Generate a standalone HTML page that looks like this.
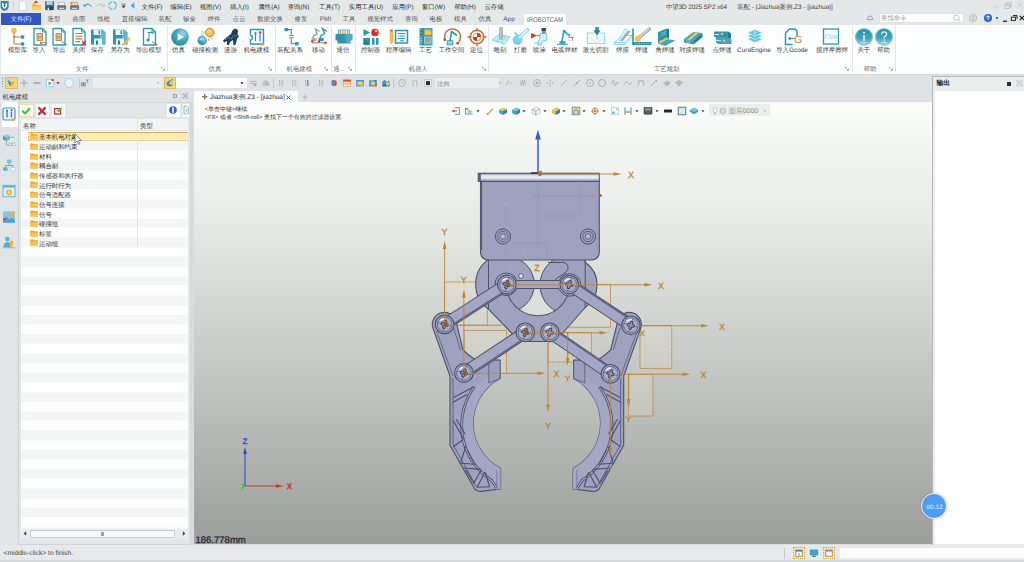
<!DOCTYPE html>
<html lang="zh"><head><meta charset="utf-8"><title>ZW3D</title><style>
html,body{margin:0;padding:0;background:#e4e8e9;}
body{width:1024px;height:562px;overflow:hidden;font-family:"Liberation Sans",sans-serif;}
#app{text-rendering:geometricPrecision;position:relative;width:1024px;height:562px;overflow:hidden;background:#e4e8e9;font-size:6.4px;line-height:8px;color:#3a3a3a;}
#app div,#app span,#app svg{position:absolute;}
.t{white-space:nowrap;text-align:center;height:8px;line-height:8px;font-size:6.4px;color:#3d3d3d;overflow:visible;}
.l{text-align:left;}
.g{color:#6a6a6a;}
#app .c{position:static;}
.nocjk #app .c{font-size:1.22em;letter-spacing:0.078em;line-height:0;vertical-align:-0.14em;-webkit-text-stroke:0.18px currentColor;}
.sep{width:1px;background:#dfe2e3;}
.tsep{width:1px;background:#c3c8ca;}
</style></head>
<body><div id="app">
<div class="t " style="left:127.0px;top:3.9px;width:50px;color:#2b2b2b"><span class="c">文件</span>(F)</div>
<div class="t " style="left:156.0px;top:3.9px;width:50px;color:#2b2b2b"><span class="c">编辑</span>(E)</div>
<div class="t " style="left:185.5px;top:3.9px;width:50px;color:#2b2b2b"><span class="c">视图</span>(V)</div>
<div class="t " style="left:214.5px;top:3.9px;width:50px;color:#2b2b2b"><span class="c">插入</span>(I)</div>
<div class="t " style="left:244.0px;top:3.9px;width:50px;color:#2b2b2b"><span class="c">属性</span>(A)</div>
<div class="t " style="left:273.5px;top:3.9px;width:50px;color:#2b2b2b"><span class="c">查询</span>(N)</div>
<div class="t " style="left:304.5px;top:3.9px;width:50px;color:#2b2b2b"><span class="c">工具</span>(T)</div>
<div class="t " style="left:341.0px;top:3.9px;width:50px;color:#2b2b2b"><span class="c">实用工具</span>(U)</div>
<div class="t " style="left:378.0px;top:3.9px;width:50px;color:#2b2b2b"><span class="c">应用</span>(P)</div>
<div class="t " style="left:408.5px;top:3.9px;width:50px;color:#2b2b2b"><span class="c">窗口</span>(W)</div>
<div class="t " style="left:440.0px;top:3.9px;width:50px;color:#2b2b2b"><span class="c">帮助</span>(H)</div>
<div class="t " style="left:469.0px;top:3.9px;width:50px;color:#2b2b2b"><span class="c">云存储</span></div>
<div class="t " style="left:651.5px;top:3.9px;width:90px;color:#444;letter-spacing:-0.12px"><span class="c">中望</span>3D 2025 SP2 x64</div>
<div class="t " style="left:725.0px;top:3.9px;width:120px;color:#444"><span class="c">装配</span> - [Jiazhua<span class="c">案例</span>.Z3 - [jiazhua]]</div>
<div style="left:1.0px;top:13.0px;width:39.8px;height:11.5px;background:#3157c3;"></div>
<div class="t " style="left:1.0px;top:16.0px;width:40px;color:#e8eefc"><span class="c">文件</span>(F)</div>
<div class="t " style="left:29.0px;top:16.2px;width:50px;color:#555"><span class="c">造型</span></div>
<div class="t " style="left:54.0px;top:16.2px;width:50px;color:#555"><span class="c">曲面</span></div>
<div class="t " style="left:78.5px;top:16.2px;width:50px;color:#555"><span class="c">线框</span></div>
<div class="t " style="left:109.5px;top:16.2px;width:50px;color:#555"><span class="c">直接编辑</span></div>
<div class="t " style="left:140.0px;top:16.2px;width:50px;color:#555"><span class="c">装配</span></div>
<div class="t " style="left:164.5px;top:16.2px;width:50px;color:#555"><span class="c">钣金</span></div>
<div class="t " style="left:189.0px;top:16.2px;width:50px;color:#555"><span class="c">焊件</span></div>
<div class="t " style="left:214.0px;top:16.2px;width:50px;color:#555"><span class="c">点云</span></div>
<div class="t " style="left:245.0px;top:16.2px;width:50px;color:#555"><span class="c">数据交换</span></div>
<div class="t " style="left:276.0px;top:16.2px;width:50px;color:#555"><span class="c">修复</span></div>
<div class="t " style="left:300.5px;top:16.2px;width:50px;color:#555">PMI</div>
<div class="t " style="left:324.0px;top:16.2px;width:50px;color:#555"><span class="c">工具</span></div>
<div class="t " style="left:355.0px;top:16.2px;width:50px;color:#555"><span class="c">视觉样式</span></div>
<div class="t " style="left:386.5px;top:16.2px;width:50px;color:#555"><span class="c">查询</span></div>
<div class="t " style="left:411.0px;top:16.2px;width:50px;color:#555"><span class="c">电极</span></div>
<div class="t " style="left:435.5px;top:16.2px;width:50px;color:#555"><span class="c">模具</span></div>
<div class="t " style="left:460.0px;top:16.2px;width:50px;color:#555"><span class="c">仿真</span></div>
<div class="t " style="left:484.0px;top:16.2px;width:50px;color:#555">App</div>
<div style="left:522.7px;top:13.4px;width:44.5px;height:12.0px;background:#fcfdfd;border:1px solid #e3e6e8;border-bottom:none;box-sizing:border-box;"></div>
<div class="t " style="left:521.0px;top:16.7px;width:48px;color:#666;font-size:6.8px;transform:scaleX(0.87)">IROBOTCAM</div>
<div style="left:878.5px;top:12.8px;width:85.0px;height:10.4px;background:#fdfdfd;border:1px solid #dde1e3;box-sizing:border-box;"></div>
<div class="t l " style="left:881.0px;top:15.4px;color:#9a9a9a"><span class="c">查找命令</span></div>
<div style="left:1.0px;top:24.5px;width:1023.0px;height:49.5px;background:#fcfdfd;"></div>
<div style="left:167.1px;top:26.0px;width:1.0px;height:46.0px;background:#e3e6e7;"></div>
<div style="left:274.8px;top:26.0px;width:1.0px;height:46.0px;background:#e3e6e7;"></div>
<div style="left:331.3px;top:26.0px;width:1.0px;height:46.0px;background:#e3e6e7;"></div>
<div style="left:354.7px;top:26.0px;width:1.0px;height:46.0px;background:#e3e6e7;"></div>
<div style="left:488.0px;top:26.0px;width:1.0px;height:46.0px;background:#e3e6e7;"></div>
<div style="left:852.3px;top:26.0px;width:1.0px;height:46.0px;background:#e3e6e7;"></div>
<div style="left:895.0px;top:26.0px;width:1.0px;height:46.0px;background:#e3e6e7;"></div>
<div class="t " style="left:-7.5px;top:47.2px;width:50px;"><span class="c">模型库</span></div>
<div class="t " style="left:14.0px;top:47.2px;width:50px;"><span class="c">导入</span></div>
<div class="t " style="left:34.0px;top:47.2px;width:50px;"><span class="c">导出</span></div>
<div class="t " style="left:54.0px;top:47.2px;width:50px;"><span class="c">关闭</span></div>
<div class="t " style="left:72.5px;top:47.2px;width:50px;"><span class="c">保存</span></div>
<div class="t " style="left:95.0px;top:47.2px;width:50px;"><span class="c">另存为</span></div>
<div class="t " style="left:123.5px;top:47.2px;width:50px;"><span class="c">导出模型</span></div>
<div class="t " style="left:153.5px;top:47.2px;width:50px;"><span class="c">仿真</span></div>
<div class="t " style="left:180.0px;top:47.2px;width:50px;"><span class="c">碰撞检测</span></div>
<div class="t " style="left:205.5px;top:47.2px;width:50px;"><span class="c">漫游</span></div>
<div class="t " style="left:231.5px;top:47.2px;width:50px;"><span class="c">机电建模</span></div>
<div class="t " style="left:265.0px;top:47.2px;width:50px;"><span class="c">装配关系</span></div>
<div class="t " style="left:293.5px;top:47.2px;width:50px;"><span class="c">移动</span></div>
<div class="t " style="left:318.0px;top:47.2px;width:50px;"><span class="c">通信</span></div>
<div class="t " style="left:345.5px;top:47.2px;width:50px;"><span class="c">控制器</span></div>
<div class="t " style="left:373.5px;top:47.2px;width:50px;"><span class="c">程序编辑</span></div>
<div class="t " style="left:400.5px;top:47.2px;width:50px;"><span class="c">工艺</span></div>
<div class="t " style="left:426.5px;top:47.2px;width:50px;"><span class="c">工作空间</span></div>
<div class="t " style="left:451.5px;top:47.2px;width:50px;"><span class="c">定位</span></div>
<div class="t " style="left:475.0px;top:47.2px;width:50px;"><span class="c">雕刻</span></div>
<div class="t " style="left:495.5px;top:47.2px;width:50px;"><span class="c">打磨</span></div>
<div class="t " style="left:514.5px;top:47.2px;width:50px;"><span class="c">喷涂</span></div>
<div class="t " style="left:539.5px;top:47.2px;width:50px;"><span class="c">电弧焊材</span></div>
<div class="t " style="left:570.5px;top:47.2px;width:50px;"><span class="c">激光切割</span></div>
<div class="t " style="left:597.5px;top:47.2px;width:50px;"><span class="c">焊接</span></div>
<div class="t " style="left:616.5px;top:47.2px;width:50px;"><span class="c">焊缝</span></div>
<div class="t " style="left:640.0px;top:47.2px;width:50px;"><span class="c">角焊缝</span></div>
<div class="t " style="left:667.0px;top:47.2px;width:50px;"><span class="c">对接焊缝</span></div>
<div class="t " style="left:697.0px;top:47.2px;width:50px;"><span class="c">点焊缝</span></div>
<div class="t " style="left:729.0px;top:47.2px;width:50px;">CuraEngine</div>
<div class="t " style="left:767.0px;top:47.2px;width:50px;"><span class="c">导入</span>Gcode</div>
<div class="t " style="left:807.0px;top:47.2px;width:50px;"><span class="c">搅拌摩擦焊</span></div>
<div class="t " style="left:838.8px;top:47.2px;width:50px;"><span class="c">关于</span></div>
<div class="t " style="left:858.5px;top:47.2px;width:50px;"><span class="c">帮助</span></div>
<div class="t g" style="left:57.0px;top:66.3px;width:50px;"><span class="c">文件</span></div>
<div class="t g" style="left:189.9px;top:66.3px;width:50px;"><span class="c">仿真</span></div>
<div class="t g" style="left:274.3px;top:66.3px;width:50px;"><span class="c">机电建模</span></div>
<div class="t g" style="left:314.0px;top:66.3px;width:50px;"><span class="c">通</span>...</div>
<div class="t g" style="left:393.4px;top:66.3px;width:50px;"><span class="c">机器人</span></div>
<div class="t g" style="left:641.7px;top:66.3px;width:50px;"><span class="c">工艺规划</span></div>
<div class="t g" style="left:845.0px;top:66.3px;width:50px;"><span class="c">帮助</span></div>
<svg style="left:160.9px;top:66.5px" width="4" height="4" viewBox="0 0 4 4" ><path d="M0.3 0.3H2M0.3 0.3V2" stroke="#8a8f92" stroke-width="0.7" fill="none"/><path d="M1.3 3.6L3.6 3.6L3.6 1.3Z" fill="#7a7f82"/></svg>
<svg style="left:268.3px;top:66.5px" width="4" height="4" viewBox="0 0 4 4" ><path d="M0.3 0.3H2M0.3 0.3V2" stroke="#8a8f92" stroke-width="0.7" fill="none"/><path d="M1.3 3.6L3.6 3.6L3.6 1.3Z" fill="#7a7f82"/></svg>
<svg style="left:324.2px;top:66.5px" width="4" height="4" viewBox="0 0 4 4" ><path d="M0.3 0.3H2M0.3 0.3V2" stroke="#8a8f92" stroke-width="0.7" fill="none"/><path d="M1.3 3.6L3.6 3.6L3.6 1.3Z" fill="#7a7f82"/></svg>
<svg style="left:348.3px;top:66.5px" width="4" height="4" viewBox="0 0 4 4" ><path d="M0.3 0.3H2M0.3 0.3V2" stroke="#8a8f92" stroke-width="0.7" fill="none"/><path d="M1.3 3.6L3.6 3.6L3.6 1.3Z" fill="#7a7f82"/></svg>
<svg style="left:481.8px;top:66.5px" width="4" height="4" viewBox="0 0 4 4" ><path d="M0.3 0.3H2M0.3 0.3V2" stroke="#8a8f92" stroke-width="0.7" fill="none"/><path d="M1.3 3.6L3.6 3.6L3.6 1.3Z" fill="#7a7f82"/></svg>
<svg style="left:844.6px;top:66.5px" width="4" height="4" viewBox="0 0 4 4" ><path d="M0.3 0.3H2M0.3 0.3V2" stroke="#8a8f92" stroke-width="0.7" fill="none"/><path d="M1.3 3.6L3.6 3.6L3.6 1.3Z" fill="#7a7f82"/></svg>
<svg style="left:888.5px;top:66.5px" width="4" height="4" viewBox="0 0 4 4" ><path d="M0.3 0.3H2M0.3 0.3V2" stroke="#8a8f92" stroke-width="0.7" fill="none"/><path d="M1.3 3.6L3.6 3.6L3.6 1.3Z" fill="#7a7f82"/></svg>
<div style="left:0.0px;top:74.0px;width:1024.0px;height:17.5px;background:#dee2e4;border-top:1px solid #d4d8da;box-sizing:border-box;"></div>
<div style="left:2.2px;top:78.0px;width:1.0px;height:10.0px;background:repeating-linear-gradient(#7c7fb0 0 1px,transparent 1px 2.6px);"></div>
<div style="left:5.0px;top:77.0px;width:12.5px;height:12.0px;background:#f5d77e;border:1px solid #e3bb55;box-sizing:border-box;"></div>
<div style="left:93.0px;top:78.3px;width:70.0px;height:9.8px;background:#eceeee;"></div>
<div style="left:163.5px;top:77.0px;width:12.5px;height:12.0px;background:#f5d77e;border:1px solid #e3bb55;box-sizing:border-box;"></div>
<div style="left:176.0px;top:78.3px;width:70.5px;height:9.8px;background:#fdfdfd;"></div>
<div style="left:434.5px;top:78.3px;width:64.0px;height:9.8px;background:#eceeee;"></div>
<div class="t l " style="left:437.0px;top:80.8px;color:#777"><span class="c">法向</span></div>
<div style="left:78.5px;top:78.0px;width:1.0px;height:10.0px;background:#c3c8ca;"></div>
<div style="left:273.0px;top:78.0px;width:1.0px;height:10.0px;background:#c3c8ca;"></div>
<div style="left:393.0px;top:78.0px;width:1.0px;height:10.0px;background:#c3c8ca;"></div>
<div style="left:0.0px;top:91.5px;width:191.0px;height:453.5px;background:#e0e4e5;"></div>
<div class="t l " style="left:2.5px;top:93.7px;color:#333"><span class="c">机电建模</span></div>
<div style="left:18.0px;top:102.0px;width:172.5px;height:443.0px;background:#e2e6e7;border:1px solid #ced3d5;box-sizing:border-box;"></div>
<div style="left:1.5px;top:102.0px;width:16.0px;height:24.5px;background:#fcfdfd;"></div>
<div style="left:18.5px;top:104.0px;width:15.0px;height:12.5px;background:#fefdf6;border:1px solid #f0dca6;box-sizing:border-box;"></div>
<div style="left:35.5px;top:104.0px;width:13.5px;height:12.5px;background:#fcfdfd;"></div>
<div style="left:51.5px;top:104.0px;width:13.5px;height:12.5px;background:#fcfdfd;"></div>
<div style="left:166.5px;top:104.0px;width:13.5px;height:12.5px;background:#fcfdfd;"></div>
<div style="left:182.5px;top:104.0px;width:6.5px;height:12.5px;background:#fcfdfd;"></div>
<div style="left:20.5px;top:119.0px;width:167.5px;height:410.0px;background:repeating-linear-gradient(#fdfefd 0 9.65px,#f2f6f5 9.65px 19.3px);background-position:0 12.5px;"></div>
<div style="left:20.5px;top:119.0px;width:167.5px;height:12.0px;background:#f1f5f6;border-bottom:1px solid #dfe4e5;box-sizing:border-box;"></div>
<div style="left:137.0px;top:119.0px;width:1.0px;height:128.0px;background:#dfe4e5;"></div>
<div class="t l " style="left:23.0px;top:122.9px;color:#333"><span class="c">名称</span></div>
<div class="t l " style="left:140.0px;top:122.9px;color:#333"><span class="c">类型</span></div>
<div style="left:28.0px;top:131.5px;width:160.3px;height:9.8px;background:#fdedb4;border-top:1px solid #d2ad6a;border-bottom:1px dotted #dcbc78;border-left:1px dotted #dcbc78;box-sizing:border-box;"></div>
<svg style="left:29.5px;top:133.2px" width="8.5" height="7" viewBox="0 0 8.5 7" ><path d="M0.3 1.2Q0.3 0.4 1 0.4H3.2L4 1.3H7.6Q8.2 1.3 8.2 2V6Q8.2 6.6 7.6 6.6H0.9Q0.3 6.6 0.3 6Z" fill="#e9a82b"/><path d="M0.3 2.6H8.2V6Q8.2 6.6 7.6 6.6H0.9Q0.3 6.6 0.3 6Z" fill="#f7c64e"/></svg>
<div class="t l " style="left:39.0px;top:134.4px;color:#2e2e2e"><span class="c">基本机电对象</span></div>
<svg style="left:29.5px;top:142.8px" width="8.5" height="7" viewBox="0 0 8.5 7" ><path d="M0.3 1.2Q0.3 0.4 1 0.4H3.2L4 1.3H7.6Q8.2 1.3 8.2 2V6Q8.2 6.6 7.6 6.6H0.9Q0.3 6.6 0.3 6Z" fill="#e9a82b"/><path d="M0.3 2.6H8.2V6Q8.2 6.6 7.6 6.6H0.9Q0.3 6.6 0.3 6Z" fill="#f7c64e"/></svg>
<div class="t l " style="left:39.0px;top:144.1px;color:#2e2e2e"><span class="c">运动副和约束</span></div>
<svg style="left:29.5px;top:152.5px" width="8.5" height="7" viewBox="0 0 8.5 7" ><path d="M0.3 1.2Q0.3 0.4 1 0.4H3.2L4 1.3H7.6Q8.2 1.3 8.2 2V6Q8.2 6.6 7.6 6.6H0.9Q0.3 6.6 0.3 6Z" fill="#e9a82b"/><path d="M0.3 2.6H8.2V6Q8.2 6.6 7.6 6.6H0.9Q0.3 6.6 0.3 6Z" fill="#f7c64e"/></svg>
<div class="t l " style="left:39.0px;top:153.7px;color:#2e2e2e"><span class="c">材料</span></div>
<svg style="left:29.5px;top:162.1px" width="8.5" height="7" viewBox="0 0 8.5 7" ><path d="M0.3 1.2Q0.3 0.4 1 0.4H3.2L4 1.3H7.6Q8.2 1.3 8.2 2V6Q8.2 6.6 7.6 6.6H0.9Q0.3 6.6 0.3 6Z" fill="#e9a82b"/><path d="M0.3 2.6H8.2V6Q8.2 6.6 7.6 6.6H0.9Q0.3 6.6 0.3 6Z" fill="#f7c64e"/></svg>
<div class="t l " style="left:39.0px;top:163.3px;color:#2e2e2e"><span class="c">耦合副</span></div>
<svg style="left:29.5px;top:171.8px" width="8.5" height="7" viewBox="0 0 8.5 7" ><path d="M0.3 1.2Q0.3 0.4 1 0.4H3.2L4 1.3H7.6Q8.2 1.3 8.2 2V6Q8.2 6.6 7.6 6.6H0.9Q0.3 6.6 0.3 6Z" fill="#e9a82b"/><path d="M0.3 2.6H8.2V6Q8.2 6.6 7.6 6.6H0.9Q0.3 6.6 0.3 6Z" fill="#f7c64e"/></svg>
<div class="t l " style="left:39.0px;top:173.0px;color:#2e2e2e"><span class="c">传感器和执行器</span></div>
<svg style="left:29.5px;top:181.4px" width="8.5" height="7" viewBox="0 0 8.5 7" ><path d="M0.3 1.2Q0.3 0.4 1 0.4H3.2L4 1.3H7.6Q8.2 1.3 8.2 2V6Q8.2 6.6 7.6 6.6H0.9Q0.3 6.6 0.3 6Z" fill="#e9a82b"/><path d="M0.3 2.6H8.2V6Q8.2 6.6 7.6 6.6H0.9Q0.3 6.6 0.3 6Z" fill="#f7c64e"/></svg>
<div class="t l " style="left:39.0px;top:182.7px;color:#2e2e2e"><span class="c">运行时行为</span></div>
<svg style="left:29.5px;top:191.1px" width="8.5" height="7" viewBox="0 0 8.5 7" ><path d="M0.3 1.2Q0.3 0.4 1 0.4H3.2L4 1.3H7.6Q8.2 1.3 8.2 2V6Q8.2 6.6 7.6 6.6H0.9Q0.3 6.6 0.3 6Z" fill="#e9a82b"/><path d="M0.3 2.6H8.2V6Q8.2 6.6 7.6 6.6H0.9Q0.3 6.6 0.3 6Z" fill="#f7c64e"/></svg>
<div class="t l " style="left:39.0px;top:192.3px;color:#2e2e2e"><span class="c">信号适配器</span></div>
<svg style="left:29.5px;top:200.8px" width="8.5" height="7" viewBox="0 0 8.5 7" ><path d="M0.3 1.2Q0.3 0.4 1 0.4H3.2L4 1.3H7.6Q8.2 1.3 8.2 2V6Q8.2 6.6 7.6 6.6H0.9Q0.3 6.6 0.3 6Z" fill="#e9a82b"/><path d="M0.3 2.6H8.2V6Q8.2 6.6 7.6 6.6H0.9Q0.3 6.6 0.3 6Z" fill="#f7c64e"/></svg>
<div class="t l " style="left:39.0px;top:202.0px;color:#2e2e2e"><span class="c">信号连接</span></div>
<svg style="left:29.5px;top:210.4px" width="8.5" height="7" viewBox="0 0 8.5 7" ><path d="M0.3 1.2Q0.3 0.4 1 0.4H3.2L4 1.3H7.6Q8.2 1.3 8.2 2V6Q8.2 6.6 7.6 6.6H0.9Q0.3 6.6 0.3 6Z" fill="#e9a82b"/><path d="M0.3 2.6H8.2V6Q8.2 6.6 7.6 6.6H0.9Q0.3 6.6 0.3 6Z" fill="#f7c64e"/></svg>
<div class="t l " style="left:39.0px;top:211.6px;color:#2e2e2e"><span class="c">信号</span></div>
<svg style="left:29.5px;top:220.1px" width="8.5" height="7" viewBox="0 0 8.5 7" ><path d="M0.3 1.2Q0.3 0.4 1 0.4H3.2L4 1.3H7.6Q8.2 1.3 8.2 2V6Q8.2 6.6 7.6 6.6H0.9Q0.3 6.6 0.3 6Z" fill="#e9a82b"/><path d="M0.3 2.6H8.2V6Q8.2 6.6 7.6 6.6H0.9Q0.3 6.6 0.3 6Z" fill="#f7c64e"/></svg>
<div class="t l " style="left:39.0px;top:221.3px;color:#2e2e2e"><span class="c">碰撞组</span></div>
<svg style="left:29.5px;top:229.7px" width="8.5" height="7" viewBox="0 0 8.5 7" ><path d="M0.3 1.2Q0.3 0.4 1 0.4H3.2L4 1.3H7.6Q8.2 1.3 8.2 2V6Q8.2 6.6 7.6 6.6H0.9Q0.3 6.6 0.3 6Z" fill="#e9a82b"/><path d="M0.3 2.6H8.2V6Q8.2 6.6 7.6 6.6H0.9Q0.3 6.6 0.3 6Z" fill="#f7c64e"/></svg>
<div class="t l " style="left:39.0px;top:230.9px;color:#2e2e2e"><span class="c">标签</span></div>
<svg style="left:29.5px;top:239.3px" width="8.5" height="7" viewBox="0 0 8.5 7" ><path d="M0.3 1.2Q0.3 0.4 1 0.4H3.2L4 1.3H7.6Q8.2 1.3 8.2 2V6Q8.2 6.6 7.6 6.6H0.9Q0.3 6.6 0.3 6Z" fill="#e9a82b"/><path d="M0.3 2.6H8.2V6Q8.2 6.6 7.6 6.6H0.9Q0.3 6.6 0.3 6Z" fill="#f7c64e"/></svg>
<div class="t l " style="left:39.0px;top:240.6px;color:#2e2e2e"><span class="c">运动组</span></div>
<div style="left:20.5px;top:529.0px;width:167.5px;height:9.5px;background:#e9edee;"></div>
<div style="left:29.5px;top:530.0px;width:145.0px;height:7.5px;background:#f6f9fa;border:1px solid #c5cacc;box-sizing:border-box;border-radius:1px;"></div>
<svg style="left:22.5px;top:531.0px" width="4" height="5" viewBox="0 0 4 5" ><path d="M3.2 0.3L0.6 2.5L3.2 4.7Z" fill="#444"/></svg>
<svg style="left:181.5px;top:531.0px" width="4" height="5" viewBox="0 0 4 5" ><path d="M0.8 0.3L3.4 2.5L0.8 4.7Z" fill="#444"/></svg>
<div style="left:100.5px;top:532.0px;width:3.0px;height:3.6px;background:repeating-linear-gradient(90deg,#9aa0a3 0 0.6px,transparent 0.6px 1.2px);"></div>
<div style="left:172.5px;top:94.0px;width:4.5px;height:4.2px;border:0.8px solid #9a9fa2;box-sizing:border-box;"></div>
<svg style="left:182.0px;top:93.2px" width="6.5" height="6" viewBox="0 0 6.5 6" ><path d="M0.8 0.6L5.7 5.4M5.7 0.6L0.8 5.4" stroke="#8d9295" stroke-width="0.8"/><rect x="0.6" y="0.4" width="5.3" height="5.2" fill="none" stroke="#b5babc" stroke-width="0.5"/></svg>
<div style="left:191.0px;top:91.5px;width:741.0px;height:11.0px;background:#dee2e4;"></div>
<div style="left:194.0px;top:91.3px;width:104.0px;height:11.5px;background:#fbfcfc;"></div>
<div class="t l " style="left:210.0px;top:94.4px;color:#333;font-size:6.5px">Jiazhua<span class="c">案例</span>.Z3 - [jiazhua]</div>
<svg style="left:202.0px;top:94.2px" width="5.5" height="5.5" viewBox="0 0 5.5 5.5" ><path d="M2.75 0.2V5.3M0.2 2.75H5.3" stroke="#3a3020" stroke-width="1.1"/><circle cx="2.75" cy="2.75" r="0.9" fill="#c98a2b"/></svg>
<svg style="left:285.5px;top:94.5px" width="5" height="5" viewBox="0 0 5 5" ><path d="M0.6 0.6L4.4 4.4M4.4 0.6L0.6 4.4" stroke="#5a4a3a" stroke-width="0.9"/></svg>
<svg style="left:302.0px;top:94.2px" width="6" height="6" viewBox="0 0 6 6" ><path d="M3 0.5V5.5M0.5 3H5.5" stroke="#a9aeb0" stroke-width="0.8"/></svg>
<div style="left:191.0px;top:102.3px;width:741.0px;height:442.7px;background:#d9dddf;"></div>
<div style="left:193.5px;top:102.3px;width:738.5px;height:442.2px;background:linear-gradient(#fcfdfb 0%,#fafcfa 3%,#f3f5f3 10%,#e9ece9 25%,#d4d7d4 45%,#c2c5c1 63%,#b1b4b0 79%,#9b9e9a 100%);"></div>
<svg style="left:193.0px;top:102.0px" width="739" height="443" viewBox="193 102 739 443" ><defs><pattern id="pDots" width="5" height="5" patternUnits="userSpaceOnUse"><rect x="1" y="1" width="0.9" height="0.9" fill="#f1cf8c"/><rect x="3.5" y="3.5" width="0.9" height="0.9" fill="#f1cf8c"/></pattern></defs><rect x="444.6" y="282.0" width="42.6" height="43.2" fill="#ece7da" fill-opacity="0.2" stroke="#bb8438" stroke-width="0.7"/><rect x="444.6" y="282.0" width="42.6" height="43.2" fill="url(#pDots)" opacity="0.8"/><rect x="464.1" y="330.6" width="42.3" height="42.7" fill="#ece7da" fill-opacity="0.2" stroke="#bb8438" stroke-width="0.7"/><rect x="464.1" y="330.6" width="42.3" height="42.7" fill="url(#pDots)" opacity="0.8"/><rect x="567.1" y="284.6" width="43.4" height="42.6" fill="#ece7da" fill-opacity="0.2" stroke="#bb8438" stroke-width="0.7"/><rect x="567.1" y="284.6" width="43.4" height="42.6" fill="url(#pDots)" opacity="0.8"/><rect x="640.0" y="325.6" width="31.8" height="42.7" fill="#ece7da" fill-opacity="0.2" stroke="#bb8438" stroke-width="0.7"/><rect x="640.0" y="325.6" width="31.8" height="42.7" fill="url(#pDots)" opacity="0.8"/><rect x="628.3" y="374.3" width="24.7" height="41.7" fill="#ece7da" fill-opacity="0.2" stroke="#bb8438" stroke-width="0.7"/><rect x="628.3" y="374.3" width="24.7" height="41.7" fill="url(#pDots)" opacity="0.8"/><rect x="567.8" y="332.7" width="23.5" height="29.3" fill="#ece7da" fill-opacity="0.2" stroke="#bb8438" stroke-width="0.7"/><rect x="567.8" y="332.7" width="23.5" height="29.3" fill="url(#pDots)" opacity="0.8"/><rect x="548.0" y="332.7" width="19.8" height="29.3" fill="#ece7da" fill-opacity="0.2" stroke="#bb8438" stroke-width="0.7"/><rect x="548.0" y="332.7" width="19.8" height="29.3" fill="url(#pDots)" opacity="0.8"/><path d="M488.5 258L488.5 259.4A30.6 30.6 0 0 0 488.5 309.2L513.5 335L522.5 341.5L553 341.5L561 335L585.2 307.5A27.5 27.5 0 0 0 585.2 262.3L585.2 258Z" fill="#9ea2bf" stroke="#4c5068" stroke-width="1.1" stroke-linejoin="round"/><path d="M488.5 260V309M585.2 260V307" stroke="#4c5068" stroke-width="1" fill="none"/><clipPath id="cpHole"><circle cx="538" cy="284" r="31.8"/></clipPath><g clip-path="url(#cpHole)"><rect x="500" y="255" width="80" height="70" fill="#dcdedb"/><circle cx="506.3" cy="284.3" r="28" fill="#9ea2bf" stroke="#4c5068" stroke-width="1"/><circle cx="569.6" cy="284.9" r="29.6" fill="#9ea2bf" stroke="#4c5068" stroke-width="1"/></g><path d="M507.3 292.2A31.8 31.8 0 0 0 568.7 292.2" fill="none" stroke="#4c5068" stroke-width="1.1"/><circle cx="521" cy="276" r="2.4" fill="#e3e5e6" stroke="#4c5068" stroke-width="0.9"/><path d="M548 262.5L563 262.5Q568.5 263 568 268.5Q567.5 272.5 562 275L556.5 278.5L555 281.5" fill="none" stroke="#4c5068" stroke-width="1"/><path d="M515 280.5L561 280.5L561 288.5L515 288.5Z" fill="#a3a7c4" stroke="#4c5068" stroke-width="1"/><circle cx="506.3" cy="284.3" r="11.3" fill="#a3a7c4" stroke="#4c5068" stroke-width="1"/><circle cx="569.6" cy="284.9" r="11.3" fill="#a3a7c4" stroke="#4c5068" stroke-width="1"/><rect x="513" y="281.4" width="50" height="6.2" fill="#a3a7c4"/><path d="M480.5 181L599.3 181L599.3 251.5Q599.3 260 590.5 260L489.3 260Q480.5 260 480.5 251.5Z" fill="#9ea2bf" stroke="#4c5068" stroke-width="1.1"/><path d="M481.3 181V250" stroke="#565a74" stroke-width="1.6"/><defs><linearGradient id="gTop" x1="0" y1="0" x2="0" y2="1"><stop offset="0" stop-color="#7d819c"/><stop offset="0.3" stop-color="#dfe5ee"/><stop offset="0.55" stop-color="#eef2f7"/><stop offset="1" stop-color="#8a8eab"/></linearGradient></defs><rect x="478.2" y="173.2" width="121.1" height="8.2" fill="url(#gTop)" stroke="#4c5068" stroke-width="1"/><rect x="478.2" y="173.2" width="2.6" height="8.2" fill="#5d617b"/><rect x="531" y="172.2" width="7" height="1.6" fill="#33364a"/><circle cx="503.0" cy="236.5" r="7.6" fill="#9da0be" stroke="#4c5068" stroke-width="1"/><circle cx="503.0" cy="236.5" r="5.2" fill="none" stroke="#4c5068" stroke-width="0.8"/><circle cx="503.0" cy="236.5" r="2.7" fill="#b9bcd3" stroke="#4c5068" stroke-width="0.8"/><circle cx="588.0" cy="236.5" r="7.6" fill="#9da0be" stroke="#4c5068" stroke-width="1"/><circle cx="588.0" cy="236.5" r="5.2" fill="none" stroke="#4c5068" stroke-width="0.8"/><circle cx="588.0" cy="236.5" r="2.7" fill="#b9bcd3" stroke="#4c5068" stroke-width="0.8"/><path d="M538 181V262M538 216H580.5V181M538 195.5H596M505.5 200V260M513 243H547V260" stroke="#8d8f9e" stroke-width="0.6" fill="none" opacity="0.8"/><circle cx="534.5" cy="195.5" r="1" fill="#4fc45a"/><circle cx="600.5" cy="195.5" r="1.2" fill="#c8302a"/><circle cx="594" cy="195.5" r="1.6" fill="none" stroke="#b28d7c" stroke-width="0.6"/><path d="M505.5 199L504 206H507ZM524 247L522.8 253H525.2ZM538 255L536.8 249H539.2Z" fill="#b3aaa0" opacity="0.9"/><path d="M433 328.4A12 12 0 0 1 455.8 320.5L462.9 349.7L467.5 354L476.5 360.8L488.8 360L500 360L500 378.5A50.8 50.8 0 0 0 500.6 468.4L500.6 489L481 491.4Q477 492 474.6 488.8L450 445.2L450 376Z" fill="#9ea2bf" stroke="#4c5068" stroke-width="1.1" stroke-linejoin="round"/><path d="M500 378.5A50.8 50.8 0 0 0 500.6 468.4L500.6 489L496 489.6L492 480.7A65.5 65.5 0 0 1 474.5 386.5L488.3 376Z" fill="#a3a7c4"/><path d="M488.8 360.3H500V378.5L488.8 383Z" fill="#9b9fbc" stroke="#4c5068" stroke-width="0.7"/><path d="M436.5 331L453 376M453.5 327.5L460.5 350" fill="none" stroke="#4c5068" stroke-width="0.7"/><path d="M474.5 386.5A65.5 65.5 0 0 0 492 480.7L496.5 488" fill="none" stroke="#4c5068" stroke-width="2.8"/><path d="M474.5 386.5A65.5 65.5 0 0 0 492 480.7L496.5 488" fill="none" stroke="#a9accb" stroke-width="1.1"/><path d="M453 378L453 444.5L477 487.5" fill="none" stroke="#4c5068" stroke-width="0.8"/><path d="M496.8 470L496.8 489.4" stroke="#6f7391" stroke-width="0.7" fill="none"/><path d="M453.5 397.5L473 387.2" fill="none" stroke="#4c5068" stroke-width="1.1" stroke-linecap="round"/><path d="M453.5 402L467 394.5" fill="none" stroke="#4c5068" stroke-width="1.1" stroke-linecap="round"/><path d="M453.5 421L463.5 439" fill="none" stroke="#4c5068" stroke-width="1.1" stroke-linecap="round"/><path d="M456.5 419.5L465 434" fill="none" stroke="#4c5068" stroke-width="1.1" stroke-linecap="round"/><path d="M453.5 446.5L462.5 440" fill="none" stroke="#4c5068" stroke-width="1.1" stroke-linecap="round"/><path d="M465.8 446.5L460.8 462" fill="none" stroke="#4c5068" stroke-width="1.1" stroke-linecap="round"/><path d="M467.5 450L474 463" fill="none" stroke="#4c5068" stroke-width="1.1" stroke-linecap="round"/><path d="M460.8 463.2L474.8 464.3" fill="none" stroke="#4c5068" stroke-width="1.1" stroke-linecap="round"/><path d="M463.5 468L480.5 469.4" fill="none" stroke="#4c5068" stroke-width="1.1" stroke-linecap="round"/><path d="M481 470.5L473.5 483.5" fill="none" stroke="#4c5068" stroke-width="1.1" stroke-linecap="round"/><path d="M466 470.5L473 482" fill="none" stroke="#4c5068" stroke-width="1.1" stroke-linecap="round"/><path d="M484.8 472.5L477.5 486.5" fill="none" stroke="#4c5068" stroke-width="1.1" stroke-linecap="round"/><path d="M485.5 473L489.5 486.5" fill="none" stroke="#4c5068" stroke-width="1.1" stroke-linecap="round"/><path d="M477.5 487.2L489.5 486.7" fill="none" stroke="#4c5068" stroke-width="1.1" stroke-linecap="round"/><g transform="translate(1073.70 0) scale(-1 1)"><path d="M433 328.4A12 12 0 0 1 455.8 320.5L462.9 349.7L467.5 354L476.5 360.8L488.8 360L500 360L500 378.5A50.8 50.8 0 0 0 500.6 468.4L500.6 489L481 491.4Q477 492 474.6 488.8L450 445.2L450 376Z" fill="#9ea2bf" stroke="#4c5068" stroke-width="1.1" stroke-linejoin="round"/><path d="M500 378.5A50.8 50.8 0 0 0 500.6 468.4L500.6 489L496 489.6L492 480.7A65.5 65.5 0 0 1 474.5 386.5L488.3 376Z" fill="#a3a7c4"/><path d="M488.8 360.3H500V378.5L488.8 383Z" fill="#9b9fbc" stroke="#4c5068" stroke-width="0.7"/><path d="M436.5 331L453 376M453.5 327.5L460.5 350" fill="none" stroke="#4c5068" stroke-width="0.7"/><path d="M474.5 386.5A65.5 65.5 0 0 0 492 480.7L496.5 488" fill="none" stroke="#4c5068" stroke-width="2.8"/><path d="M474.5 386.5A65.5 65.5 0 0 0 492 480.7L496.5 488" fill="none" stroke="#a9accb" stroke-width="1.1"/><path d="M453 378L453 444.5L477 487.5" fill="none" stroke="#4c5068" stroke-width="0.8"/><path d="M496.8 470L496.8 489.4" stroke="#6f7391" stroke-width="0.7" fill="none"/><path d="M453.5 397.5L473 387.2" fill="none" stroke="#4c5068" stroke-width="1.1" stroke-linecap="round"/><path d="M453.5 402L467 394.5" fill="none" stroke="#4c5068" stroke-width="1.1" stroke-linecap="round"/><path d="M453.5 421L463.5 439" fill="none" stroke="#4c5068" stroke-width="1.1" stroke-linecap="round"/><path d="M456.5 419.5L465 434" fill="none" stroke="#4c5068" stroke-width="1.1" stroke-linecap="round"/><path d="M453.5 446.5L462.5 440" fill="none" stroke="#4c5068" stroke-width="1.1" stroke-linecap="round"/><path d="M465.8 446.5L460.8 462" fill="none" stroke="#4c5068" stroke-width="1.1" stroke-linecap="round"/><path d="M467.5 450L474 463" fill="none" stroke="#4c5068" stroke-width="1.1" stroke-linecap="round"/><path d="M460.8 463.2L474.8 464.3" fill="none" stroke="#4c5068" stroke-width="1.1" stroke-linecap="round"/><path d="M463.5 468L480.5 469.4" fill="none" stroke="#4c5068" stroke-width="1.1" stroke-linecap="round"/><path d="M481 470.5L473.5 483.5" fill="none" stroke="#4c5068" stroke-width="1.1" stroke-linecap="round"/><path d="M466 470.5L473 482" fill="none" stroke="#4c5068" stroke-width="1.1" stroke-linecap="round"/><path d="M484.8 472.5L477.5 486.5" fill="none" stroke="#4c5068" stroke-width="1.1" stroke-linecap="round"/><path d="M485.5 473L489.5 486.5" fill="none" stroke="#4c5068" stroke-width="1.1" stroke-linecap="round"/><path d="M477.5 487.2L489.5 486.7" fill="none" stroke="#4c5068" stroke-width="1.1" stroke-linecap="round"/></g><line x1="525.3" y1="332.3" x2="463.9" y2="373.0" stroke="#4c5068" stroke-width="12.5" stroke-linecap="round"/><line x1="525.3" y1="332.3" x2="463.9" y2="373.0" stroke="#a3a7c4" stroke-width="10.5" stroke-linecap="round"/><line x1="521.1" y1="340.5" x2="473.1" y2="372.4" stroke="#5f6382" stroke-width="1.5"/><line x1="549.8" y1="332.3" x2="610.5" y2="373.8" stroke="#4c5068" stroke-width="12.5" stroke-linecap="round"/><line x1="549.8" y1="332.3" x2="610.5" y2="373.8" stroke="#a3a7c4" stroke-width="10.5" stroke-linecap="round"/><line x1="559.0" y1="333.1" x2="606.5" y2="365.5" stroke="#5f6382" stroke-width="1.5"/><line x1="506.8" y1="284.5" x2="444.6" y2="324.4" stroke="#4c5068" stroke-width="12.5" stroke-linecap="round"/><line x1="506.8" y1="284.5" x2="444.6" y2="324.4" stroke="#a3a7c4" stroke-width="10.5" stroke-linecap="round"/><line x1="502.5" y1="292.6" x2="453.8" y2="323.9" stroke="#5f6382" stroke-width="1.5"/><line x1="569.3" y1="284.6" x2="630.9" y2="325.3" stroke="#4c5068" stroke-width="12.5" stroke-linecap="round"/><line x1="569.3" y1="284.6" x2="630.9" y2="325.3" stroke="#a3a7c4" stroke-width="10.5" stroke-linecap="round"/><line x1="578.5" y1="285.2" x2="626.7" y2="317.1" stroke="#5f6382" stroke-width="1.5"/><circle cx="506.8" cy="284.5" r="9.3" fill="#a6a9c7" stroke="#4c5068" stroke-width="1.2"/><circle cx="506.8" cy="284.5" r="7.3" fill="#a9adca" stroke="#4c5068" stroke-width="0.7"/><path d="M502.4 280.9A5.8 5.8 0 0 1 508.0 278.9" stroke="#eef1f8" stroke-width="1.7" fill="none" opacity="0.9"/><path d="M500.0 282.7L513.6 286.3M508.6 277.7L505.0 291.3" stroke="#4c5068" stroke-width="0.6" fill="none"/><g transform="rotate(15 506.8 284.5)"><path d="M503.4 283.3h2.2v-2.8h2.4v2.8h2.2v2.4h-2.2v2.8h-2.4v-2.8h-2.2z" fill="#9498b7" stroke="#3d4158" stroke-width="0.9"/></g><circle cx="569.3" cy="284.6" r="9.3" fill="#a6a9c7" stroke="#4c5068" stroke-width="1.2"/><circle cx="569.3" cy="284.6" r="7.3" fill="#a9adca" stroke="#4c5068" stroke-width="0.7"/><path d="M564.9 281.0A5.8 5.8 0 0 1 570.5 279.0" stroke="#eef1f8" stroke-width="1.7" fill="none" opacity="0.9"/><path d="M562.5 282.8L576.1 286.4M571.1 277.8L567.5 291.4" stroke="#4c5068" stroke-width="0.6" fill="none"/><g transform="rotate(15 569.3 284.6)"><path d="M565.9 283.4h2.2v-2.8h2.4v2.8h2.2v2.4h-2.2v2.8h-2.4v-2.8h-2.2z" fill="#9498b7" stroke="#3d4158" stroke-width="0.9"/></g><circle cx="444.6" cy="324.4" r="9.3" fill="#a6a9c7" stroke="#4c5068" stroke-width="1.2"/><circle cx="444.6" cy="324.4" r="7.3" fill="#a9adca" stroke="#4c5068" stroke-width="0.7"/><path d="M440.2 320.8A5.8 5.8 0 0 1 445.8 318.8" stroke="#eef1f8" stroke-width="1.7" fill="none" opacity="0.9"/><path d="M437.8 322.6L451.4 326.2M446.4 317.6L442.8 331.2" stroke="#4c5068" stroke-width="0.6" fill="none"/><g transform="rotate(15 444.6 324.4)"><path d="M441.2 323.2h2.2v-2.8h2.4v2.8h2.2v2.4h-2.2v2.8h-2.4v-2.8h-2.2z" fill="#9498b7" stroke="#3d4158" stroke-width="0.9"/></g><circle cx="630.9" cy="325.3" r="9.3" fill="#a6a9c7" stroke="#4c5068" stroke-width="1.2"/><circle cx="630.9" cy="325.3" r="7.3" fill="#a9adca" stroke="#4c5068" stroke-width="0.7"/><path d="M626.5 321.7A5.8 5.8 0 0 1 632.1 319.7" stroke="#eef1f8" stroke-width="1.7" fill="none" opacity="0.9"/><path d="M624.1 323.5L637.7 327.1M632.7 318.5L629.1 332.1" stroke="#4c5068" stroke-width="0.6" fill="none"/><g transform="rotate(15 630.9 325.3)"><path d="M627.5 324.1h2.2v-2.8h2.4v2.8h2.2v2.4h-2.2v2.8h-2.4v-2.8h-2.2z" fill="#9498b7" stroke="#3d4158" stroke-width="0.9"/></g><circle cx="525.3" cy="332.3" r="9.3" fill="#a6a9c7" stroke="#4c5068" stroke-width="1.2"/><circle cx="525.3" cy="332.3" r="7.3" fill="#a9adca" stroke="#4c5068" stroke-width="0.7"/><path d="M520.9 328.7A5.8 5.8 0 0 1 526.5 326.7" stroke="#eef1f8" stroke-width="1.7" fill="none" opacity="0.9"/><path d="M518.5 330.5L532.1 334.1M527.1 325.5L523.5 339.1" stroke="#4c5068" stroke-width="0.6" fill="none"/><g transform="rotate(15 525.3 332.3)"><path d="M521.9 331.1h2.2v-2.8h2.4v2.8h2.2v2.4h-2.2v2.8h-2.4v-2.8h-2.2z" fill="#9498b7" stroke="#3d4158" stroke-width="0.9"/></g><circle cx="549.8" cy="332.3" r="9.3" fill="#a6a9c7" stroke="#4c5068" stroke-width="1.2"/><circle cx="549.8" cy="332.3" r="7.3" fill="#a9adca" stroke="#4c5068" stroke-width="0.7"/><path d="M545.4 328.7A5.8 5.8 0 0 1 551.0 326.7" stroke="#eef1f8" stroke-width="1.7" fill="none" opacity="0.9"/><path d="M543.0 330.5L556.6 334.1M551.6 325.5L548.0 339.1" stroke="#4c5068" stroke-width="0.6" fill="none"/><g transform="rotate(15 549.8 332.3)"><path d="M546.4 331.1h2.2v-2.8h2.4v2.8h2.2v2.4h-2.2v2.8h-2.4v-2.8h-2.2z" fill="#9498b7" stroke="#3d4158" stroke-width="0.9"/></g><circle cx="463.9" cy="373.0" r="9.3" fill="#a6a9c7" stroke="#4c5068" stroke-width="1.2"/><circle cx="463.9" cy="373.0" r="7.3" fill="#a9adca" stroke="#4c5068" stroke-width="0.7"/><path d="M459.5 369.4A5.8 5.8 0 0 1 465.1 367.4" stroke="#eef1f8" stroke-width="1.7" fill="none" opacity="0.9"/><path d="M457.1 371.2L470.7 374.8M465.7 366.2L462.1 379.8" stroke="#4c5068" stroke-width="0.6" fill="none"/><g transform="rotate(15 463.9 373.0)"><path d="M460.5 371.8h2.2v-2.8h2.4v2.8h2.2v2.4h-2.2v2.8h-2.4v-2.8h-2.2z" fill="#9498b7" stroke="#3d4158" stroke-width="0.9"/></g><circle cx="610.5" cy="373.8" r="9.3" fill="#a6a9c7" stroke="#4c5068" stroke-width="1.2"/><circle cx="610.5" cy="373.8" r="7.3" fill="#a9adca" stroke="#4c5068" stroke-width="0.7"/><path d="M606.1 370.2A5.8 5.8 0 0 1 611.7 368.2" stroke="#eef1f8" stroke-width="1.7" fill="none" opacity="0.9"/><path d="M603.7 372.0L617.3 375.6M612.3 367.0L608.7 380.6" stroke="#4c5068" stroke-width="0.6" fill="none"/><g transform="rotate(15 610.5 373.8)"><path d="M607.1 372.6h2.2v-2.8h2.4v2.8h2.2v2.4h-2.2v2.8h-2.4v-2.8h-2.2z" fill="#9498b7" stroke="#3d4158" stroke-width="0.9"/></g><line x1="538.0" y1="174.0" x2="617.5" y2="174.0" stroke="#bb8438" stroke-width="0.9"/><path d="M621.5 174.0L613.5 172.2L613.5 175.8Z" fill="#bb8438"/><text x="631.0" y="177.5" font-family="Liberation Sans, sans-serif" font-size="9.0" fill="#bb8438" stroke="#bb8438" stroke-width="0.3" text-anchor="middle">X</text><line x1="444.6" y1="324.0" x2="444.6" y2="245.0" stroke="#bb8438" stroke-width="0.9"/><path d="M444.6 241.0L442.8 249.0L446.4 249.0Z" fill="#bb8438"/><text x="444.4" y="234.8" font-family="Liberation Sans, sans-serif" font-size="9.0" fill="#bb8438" stroke="#bb8438" stroke-width="0.3" text-anchor="middle">Y</text><line x1="463.9" y1="373.0" x2="463.9" y2="293.5" stroke="#bb8438" stroke-width="0.9"/><path d="M463.9 289.5L462.1 297.5L465.7 297.5Z" fill="#bb8438"/><text x="463.7" y="282.9" font-family="Liberation Sans, sans-serif" font-size="9.0" fill="#bb8438" stroke="#bb8438" stroke-width="0.3" text-anchor="middle">Y</text><line x1="506.8" y1="284.8" x2="648.5" y2="284.8" stroke="#bb8438" stroke-width="0.9"/><path d="M652.5 284.8L644.5 283.0L644.5 286.6Z" fill="#bb8438"/><text x="661.0" y="288.6" font-family="Liberation Sans, sans-serif" font-size="9.0" fill="#bb8438" stroke="#bb8438" stroke-width="0.3" text-anchor="middle">X</text><text x="537.0" y="270.7" font-family="Liberation Sans, sans-serif" font-size="9.0" fill="#bb8438" stroke="#bb8438" stroke-width="0.3" text-anchor="middle">Z</text><line x1="640.0" y1="325.8" x2="705.0" y2="325.8" stroke="#bb8438" stroke-width="0.9"/><path d="M709.0 325.8L701.0 324.0L701.0 327.6Z" fill="#bb8438"/><text x="722.0" y="329.7" font-family="Liberation Sans, sans-serif" font-size="9.0" fill="#bb8438" stroke="#bb8438" stroke-width="0.3" text-anchor="middle">X</text><line x1="525.3" y1="332.8" x2="603.5" y2="332.8" stroke="#bb8438" stroke-width="0.9"/><path d="M607.5 332.8L599.5 331.0L599.5 334.6Z" fill="#bb8438"/><text x="642.2" y="336.3" font-family="Liberation Sans, sans-serif" font-size="7.5" fill="#bb8438" stroke="#bb8438" stroke-width="0.3" text-anchor="middle">X</text><line x1="463.9" y1="373.3" x2="541.5" y2="373.3" stroke="#bb8438" stroke-width="0.9"/><path d="M545.5 373.3L537.5 371.5L537.5 375.1Z" fill="#bb8438"/><text x="556.5" y="376.8" font-family="Liberation Sans, sans-serif" font-size="9.0" fill="#bb8438" stroke="#bb8438" stroke-width="0.3" text-anchor="middle">X</text><text x="567.5" y="381.0" font-family="Liberation Sans, sans-serif" font-size="7.5" fill="#bb8438" stroke="#bb8438" stroke-width="0.3" text-anchor="middle">Y</text><line x1="548.0" y1="332.0" x2="548.0" y2="408.5" stroke="#bb8438" stroke-width="0.9"/><path d="M548.0 412.5L546.2 404.5L549.8 404.5Z" fill="#bb8438"/><text x="548.0" y="429.2" font-family="Liberation Sans, sans-serif" font-size="9.0" fill="#bb8438" stroke="#bb8438" stroke-width="0.3" text-anchor="middle">Y</text><line x1="567.6" y1="332.0" x2="567.6" y2="362.0" stroke="#bb8438" stroke-width="0.9"/><path d="M567.6 366.0L565.8 358.0L569.4 358.0Z" fill="#bb8438"/><line x1="620.0" y1="374.2" x2="686.5" y2="374.2" stroke="#bb8438" stroke-width="0.9"/><path d="M690.5 374.2L682.5 372.4L682.5 376.0Z" fill="#bb8438"/><text x="703.4" y="377.8" font-family="Liberation Sans, sans-serif" font-size="9.0" fill="#bb8438" stroke="#bb8438" stroke-width="0.3" text-anchor="middle">X</text><line x1="628.6" y1="374.0" x2="628.6" y2="403.0" stroke="#bb8438" stroke-width="0.9"/><path d="M628.6 407.0L626.8 399.0L630.4 399.0Z" fill="#bb8438"/><text x="628.6" y="422.0" font-family="Liberation Sans, sans-serif" font-size="7.5" fill="#bb8438" stroke="#bb8438" stroke-width="0.3" text-anchor="middle">Y</text><line x1="610.3" y1="373.8" x2="610.3" y2="452.0" stroke="#bb8438" stroke-width="0.9"/><path d="M610.3 456.0L608.5 448.0L612.1 448.0Z" fill="#bb8438"/><text x="610.5" y="470.2" font-family="Liberation Sans, sans-serif" font-size="6.0" fill="#bb8438" stroke="#bb8438" stroke-width="0.3" text-anchor="middle">Y</text><line x1="444.6" y1="325.2" x2="502" y2="325.2" stroke="#bb8438" stroke-width="0.9"/><rect x="506.0" y="282.3" width="3.6" height="4.4" fill="#8a5f22"/><rect x="443.8" y="322.2" width="3.6" height="4.4" fill="#8a5f22"/><rect x="524.5" y="330.1" width="3.6" height="4.4" fill="#8a5f22"/><rect x="463.1" y="370.8" width="3.6" height="4.4" fill="#8a5f22"/><line x1="538" y1="173" x2="538" y2="137" stroke="#3559cf" stroke-width="1.5"/><path d="M538 129.5L535.2 139.5H540.8Z" fill="#3559cf"/><path d="M538 172L541.6 170.2L541.8 175.5L538.5 176.5Z" fill="#a87422"/><line x1="245" y1="486" x2="245" y2="452" stroke="#3559cf" stroke-width="1.2"/><path d="M245 447L243.1 454H246.9Z" fill="#2f4fc0"/><text x="245.0" y="443.9" font-family="Liberation Sans, sans-serif" font-size="8.0" fill="#3559cf" stroke="#3559cf" stroke-width="0.3" text-anchor="middle" font-weight="bold">Z</text><line x1="244" y1="486" x2="278" y2="486" stroke="#c83a32" stroke-width="1.2"/><path d="M284 486L276 484.3V487.7Z" fill="#c83a32"/><text x="289.5" y="489.2" font-family="Liberation Sans, sans-serif" font-size="8.0" fill="#c83a32" stroke="#c83a32" stroke-width="0.3" text-anchor="middle" font-weight="bold">X</text><path d="M241.8 484L244.5 486L242 489" stroke="#37c43a" stroke-width="1.4" fill="none"/></svg>
<div class="t l " style="left:204.6px;top:106.3px;color:#333;font-size:5.95px">&lt;<span class="c">单击中键</span>&gt;<span class="c">继续</span></div>
<div class="t l " style="left:204.6px;top:114.1px;color:#333;font-size:5.95px">&lt;F8&gt; <span class="c">或者</span> &lt;Shift-roll&gt; <span class="c">查找下一个有效的过滤器设置</span>.</div>
<div class="t l " style="left:195.4px;top:536.1px;color:#2a2d38;font-size:9.55px;line-height:10px;height:10px;-webkit-text-stroke:0.3px #2a2d38;letter-spacing:0px">186.778mm</div>
<div style="left:932.0px;top:76.0px;width:92.0px;height:469.5px;background:#e9edee;border-left:1px solid #b4b9bb;border-top:1px solid #b4b9bb;border-bottom:1px solid #b9bdbf;box-sizing:border-box;"></div>
<div style="left:935.0px;top:90.5px;width:89.0px;height:453.0px;background:#fefefe;"></div>
<div class="t l " style="left:936.5px;top:80.0px;color:#1c1c1c;font-weight:bold;font-size:6.8px"><span class="c">输出</span></div>
<div style="left:1007.0px;top:81.5px;width:4.0px;height:4.0px;background:#2a2d33;"></div>
<svg style="left:1015.5px;top:80.3px" width="7" height="6.5" viewBox="0 0 7 6.5" ><path d="M1 0.8L6 5.7M6 0.8L1 5.7" stroke="#a6abae" stroke-width="0.8"/><rect x="0.5" y="0.4" width="6" height="5.7" fill="none" stroke="#c5c9cb" stroke-width="0.5"/></svg>
<div style="left:0.0px;top:545.0px;width:1024.0px;height:17.0px;background:#e6e8e9;"></div>
<div style="left:0.0px;top:559.5px;width:1024.0px;height:2.5px;background:#d5d8da;"></div>
<div class="t l " style="left:3.5px;top:550.0px;color:#444;font-size:6.7px">&lt;middle-click&gt; to finish.</div>
<div style="left:839.5px;top:548.0px;width:184.5px;height:10.2px;background:#fdfdfd;"></div>
<div style="left:784.0px;top:547.5px;width:1.0px;height:11.0px;background:#c3c8ca;"></div>
<svg style="left:6.5px;top:25.5px" width="22" height="22" viewBox="-11 -11 22 22"><path d="M-4 -5V7H3M-4 0H3" stroke="#b07a3c" stroke-width="1" fill="none"/><circle cx="-4" cy="-6.5" r="2.4" fill="#f6c343" stroke="#d9982e" stroke-width="0.6"/><rect x="3" y="-1.6" width="3.2" height="3.2" fill="#2f96ae"/><rect x="3" y="5.4" width="3.2" height="3.2" fill="#2f96ae"/><circle cx="-4" cy="0" r="0.7" fill="#d3322c"/></svg>
<svg style="left:28.5px;top:25.5px" width="22" height="22" viewBox="-11 -11 22 22"><path d="M-6.0 -8.5H2.5L6.0 -5.0V8.0H-6.0Z" fill="#fdfefe" stroke="#2f96ae" stroke-width="1.3" stroke-linejoin="round"/><path d="M2.5 -8.5V-5.0H6.0" fill="none" stroke="#2f96ae" stroke-width="1.0"/><rect x="-3" y="-3.5" width="5.5" height="7" fill="#e9c58d" stroke="#b07a3c" stroke-width="0.8"/><path d="M-1.5 -2V2M1 -2V2M-1.5 0H1" stroke="#b07a3c" stroke-width="0.6"/><path d="M1 6Q4 4 7 7" stroke="#b07a3c" stroke-width="0.9" fill="none"/><circle cx="1" cy="6" r="0.9" fill="#d3322c"/></svg>
<svg style="left:48.0px;top:25.5px" width="22" height="22" viewBox="-11 -11 22 22"><path d="M-6.0 -8.5H2.5L6.0 -5.0V8.0H-6.0Z" fill="#fdfefe" stroke="#2f96ae" stroke-width="1.3" stroke-linejoin="round"/><path d="M2.5 -8.5V-5.0H6.0" fill="none" stroke="#2f96ae" stroke-width="1.0"/><rect x="-3" y="-3.5" width="5.5" height="7" fill="#e9c58d" stroke="#b07a3c" stroke-width="0.8"/><path d="M-1.5 -2V2M1 -2V2M-1.5 0H1" stroke="#b07a3c" stroke-width="0.6"/><path d="M2.5 4.5L7 7.5" stroke="#777" stroke-width="0.9" fill="none"/><circle cx="7" cy="7.5" r="0.8" fill="#777"/></svg>
<svg style="left:68.0px;top:25.5px" width="22" height="22" viewBox="-11 -11 22 22"><path d="M-6.0 -8.5H2.5L6.0 -5.0V8.0H-6.0Z" fill="#fdfefe" stroke="#2f96ae" stroke-width="1.3" stroke-linejoin="round"/><path d="M2.5 -8.5V-5.0H6.0" fill="none" stroke="#2f96ae" stroke-width="1.0"/><path d="M-3.5 -3.5H3.5M-3.5 -0.8H3.5M-3.5 1.9H3.5M-3.5 4.6H1" stroke="#b07a3c" stroke-width="1.1"/><path d="M3 4L7 8M7 4L3 8" stroke="#d3322c" stroke-width="1.3"/></svg>
<svg style="left:86.7px;top:25.5px" width="22" height="22" viewBox="-11 -11 22 22"><path d="M-7 -7.5H4.5L7.5 -4.5V7.5H-7Z" fill="#2f96ae"/><path d="M2 -7.5H4.5L7.5 -4.5V7.5H2Z" fill="#8fd4e4" opacity="0.55"/><rect x="-4.5" y="-7.5" width="7.5" height="5.5" fill="#e8f6fa"/><rect x="0.5" y="-6.5" width="1.6" height="3.6" fill="#2f96ae"/><rect x="-4" y="1.5" width="8" height="6" fill="#f4fbfd"/><rect x="-2" y="3.5" width="2" height="4" fill="#1f7f98"/></svg>
<svg style="left:109.0px;top:25.5px" width="22" height="22" viewBox="-11 -11 22 22"><path d="M-7 -7.5H4.5L7.5 -4.5V7.5H-7Z" fill="#2f96ae"/><path d="M2 -7.5H4.5L7.5 -4.5V7.5H2Z" fill="#8fd4e4" opacity="0.55"/><rect x="-4.5" y="-7.5" width="7.5" height="5.5" fill="#e8f6fa"/><rect x="0.5" y="-6.5" width="1.6" height="3.6" fill="#2f96ae"/><rect x="-4" y="1.5" width="8" height="6" fill="#f4fbfd"/><rect x="-2" y="3.5" width="2" height="4" fill="#1f7f98"/><path d="M3 6.5L9 0.5L10.2 1.7L4.4 7.7L2.6 8.2Z" fill="#f6c343" stroke="#c9962e" stroke-width="0.4"/></svg>
<svg style="left:138.5px;top:25.5px" width="22" height="22" viewBox="-11 -11 22 22"><path d="M-6.5 -8.5H2.0L5.5 -5.0V8.0H-6.5Z" fill="#fdfefe" stroke="#2f96ae" stroke-width="1.3" stroke-linejoin="round"/><path d="M2.0 -8.5V-5.0H5.5" fill="none" stroke="#2f96ae" stroke-width="1.0"/><path d="M-2.5 -4.5H3V-2.5M-1 -4.5V2.5" stroke="#2f96ae" stroke-width="1" fill="none"/><circle cx="-2" cy="3" r="1.6" fill="#2f96ae"/><path d="M2 4.5L6.5 7.5" stroke="#777" stroke-width="0.9"/><circle cx="6.7" cy="7.6" r="0.8" fill="#8a5a3a"/></svg>
<svg style="left:169px;top:25.5px" width="22" height="22" viewBox="-11 -11 22 22"><defs><radialGradient id="gSim" cx="0.65" cy="0.3" r="0.8"><stop offset="0" stop-color="#9ed8e6"/><stop offset="0.45" stop-color="#4aa7bd"/><stop offset="1" stop-color="#23869f"/></radialGradient></defs><circle cx="0" cy="0" r="8.8" fill="url(#gSim)"/><path d="M-2.3 -3.8L3.8 0L-2.3 3.8Z" fill="#f4fbfd"/></svg>
<svg style="left:194.5px;top:25.5px" width="22" height="22" viewBox="-11 -11 22 22"><circle cx="-3.8" cy="3.5" r="4.7" fill="url(#gSim)"/><circle cx="-5" cy="2" r="1.6" fill="#bfe6ef" opacity="0.8"/><circle cx="3.8" cy="-4.5" r="4.3" fill="#f6c343" stroke="#d8502e" stroke-width="0.7"/><circle cx="3" cy="-5.5" r="2" fill="#fbe08a"/><path d="M-3.5 -6L-1.8 -3.6M-4.8 -2.5L-2.3 -1.8M2 1.5L3 4M4.5 0.8L6.5 2.5" stroke="#e08a2e" stroke-width="0.9"/></svg>
<svg style="left:220.0px;top:25.5px" width="22" height="22" viewBox="-11 -11 22 22"><path d="M3 -8Q6 -9 7 -6.5L6.5 -2.5L8 -1L6 2L4.5 8H2.5L2 3L-1 5L-2 8H-4L-4 4L-7 5.5L-8 3.5L-4 0L0 -3Q1 -7 3 -8Z" fill="#1f3d5e"/><path d="M-6 2.5L-3 0.5L0 1.5L3 -1.5L6 -1" stroke="#3fb1cf" stroke-width="1.2" fill="none" stroke-dasharray="1.2 0.9"/></svg>
<svg style="left:246.0px;top:25.5px" width="22" height="22" viewBox="-11 -11 22 22"><path d="M-6.5 -7.5H6.5V7H-6.5V3Q-4.5 2.5 -4.5 0.5Q-4.5 -1.5 -6.5 -2Z" fill="#f4fbfd" stroke="#2f96ae" stroke-width="1.4" stroke-linejoin="round"/><path d="M-1.5 -3.5V4M3 -3V4.5" stroke="#3b7fd0" stroke-width="1.2"/><circle cx="-1.5" cy="-3.8" r="1.1" fill="#3b7fd0"/><circle cx="3.2" cy="-4.5" r="1.3" fill="#d3322c"/><circle cx="5.5" cy="7.3" r="1.5" fill="#f0a030"/></svg>
<svg style="left:279.5px;top:25.5px" width="22" height="22" viewBox="-11 -11 22 22"><rect x="-6.5" y="-9" width="3.6" height="3.2" fill="#2f96ae"/><rect x="4" y="5" width="3.6" height="3.4" fill="#2f96ae"/><path d="M-3 -7.4H0.3V-2.5M0.3 1.5V6.7H4" stroke="#2f96ae" stroke-width="1.1" fill="none"/><path d="M-2 -1.5H2.6M-2 0.7H2.6" stroke="#b07a3c" stroke-width="1.1"/></svg>
<svg style="left:308.0px;top:25.5px" width="22" height="22" viewBox="-11 -11 22 22"><path d="M-6.5 2.5L-5.5 -1L-2 -3L-3.5 -8L0.5 -5.5" stroke="#9a9c9f" stroke-width="1.4" fill="none"/><path d="M-7.5 1H-2.5V4H-7.5Z" fill="#a9abad"/><path d="M0.5 2.5L2 -1.5L5.5 -3.5L3.5 -8.5L8 -5.5" stroke="#2f96ae" stroke-width="1.4" fill="none"/><path d="M-0.5 1H4.5V4H-0.5Z" fill="#2f96ae"/><path d="M-7 5.8H6" stroke="#b07a3c" stroke-width="1"/><path d="M8.5 5.8L5.5 4.2V7.4Z" fill="#d3322c"/><circle cx="-6.8" cy="4.4" r="1.2" fill="#d3322c"/><circle cx="0" cy="4.4" r="1.2" fill="#d3322c"/></svg>
<svg style="left:332.5px;top:25.5px" width="22" height="22" viewBox="-11 -11 22 22"><path d="M-5.5 -7H5.5V-3H-5.5Z" fill="#f6f1dc" stroke="#2f96ae" stroke-width="0.8"/><path d="M-3.6 -6V-3.5M-1.2 -6V-3.5M1.2 -6V-3.5M3.6 -6V-3.5" stroke="#d9a53a" stroke-width="1.1"/><path d="M-8.5 -3H8.5V3.5H6.5V6.5H-6.5V3.5H-8.5Z" fill="#2f96ae"/><path d="M1 -3H8.5V3.5H6.5V6.5H3Z" fill="#8fd4e4" opacity="0.35"/><circle cx="-5" cy="1.5" r="0.6" fill="#3b4fd0"/></svg>
<svg style="left:360.0px;top:25.5px" width="22" height="22" viewBox="-11 -11 22 22"><path d="M-7.5 -8L-0.8 -4.5L-7.5 -1Z" fill="#2f96ae"/><circle cx="4" cy="-4.5" r="3.8" fill="#d3322c"/><circle cx="5.2" cy="-6" r="1.2" fill="#f0c070"/><rect x="-7.5" y="1" width="6.5" height="6.8" fill="#2f96ae"/><path d="M-7.5 1L-1 7.8H-7.5Z" fill="#1f7f98"/><rect x="1" y="1" width="2.5" height="6.8" fill="#2f96ae"/><rect x="5" y="1" width="2.5" height="6.8" fill="#2f96ae"/></svg>
<svg style="left:388.0px;top:25.5px" width="22" height="22" viewBox="-11 -11 22 22"><path d="M-8.8 -6H-6.2V4.5L-7.5 7L-8.8 4.5Z" fill="#f6c343" stroke="#c98f2e" stroke-width="0.5"/><rect x="-8.8" y="-7.5" width="2.6" height="1.8" fill="#b07a3c"/><rect x="-3.5" y="-6.5" width="12" height="12.5" fill="#f4fbfd" stroke="#2f96ae" stroke-width="1.5"/><path d="M-1 -3.5H4M1 -1H6M-1 1.5H6M1 3.8H5" stroke="#2f96ae" stroke-width="1"/><path d="M4 -3.5H6.5M-1 -1H0.5" stroke="#b07a3c" stroke-width="1"/></svg>
<svg style="left:414.5px;top:25.5px" width="22" height="22" viewBox="-11 -11 22 22"><rect x="-6.5" y="-9" width="13" height="17.5" fill="#3aa6bf"/><path d="M-3 -9V8.5" stroke="#1c7a92" stroke-width="0.8"/><circle cx="-4.8" cy="-5.8" r="0.9" fill="#d3322c"/><circle cx="-4.8" cy="-2.6" r="0.9" fill="#d3322c"/><path d="M-1.5 -7.5H4L5.5 -6V-2H-1.5Z" fill="#f6c343" stroke="#c98f2e" stroke-width="0.5"/><rect x="-1.5" y="0" width="6.5" height="6" fill="#8fa3a8" stroke="#d7eef3" stroke-width="0.5"/><path d="M-5.6 1.5H-4M-5.6 3.5H-4M-5.6 5.5H-4" stroke="#bfe6ef" stroke-width="0.7"/></svg>
<svg style="left:441.0px;top:25.5px" width="22" height="22" viewBox="-11 -11 22 22"><path d="M-7 2.5A8 8 0 1 1 5.5 6.2" stroke="#b07a3c" stroke-width="1.5" fill="none"/><circle cx="-7.2" cy="2.8" r="1.2" fill="#555"/><circle cx="5.5" cy="6.3" r="1.2" fill="#d3322c"/><path d="M-4.5 7.5V4H0.5V7.5ZM-2 4L-0.5 -5.5L5 -1.5" stroke="#2f96ae" stroke-width="1.6" fill="none" stroke-linejoin="round"/><path d="M-4.5 4H0.5V7.5H-4.5Z" fill="#8fd4e4"/></svg>
<svg style="left:466.0px;top:25.5px" width="22" height="22" viewBox="-11 -11 22 22"><circle cx="0" cy="0" r="6.8" fill="none" stroke="#b07a3c" stroke-width="1.6"/><circle cx="0" cy="0" r="4" fill="#fdf6ea" stroke="#b07a3c" stroke-width="0.6"/><path d="M0 0V-4A4 4 0 0 1 4 0ZM0 0V4A4 4 0 0 1 -4 0Z" fill="#d3322c"/><path d="M0 -9.5V-5.5M0 5.5V9.5M-9.5 0H-5.5M5.5 0H9.5" stroke="#b07a3c" stroke-width="1.3"/></svg>
<svg style="left:489.5px;top:25.5px" width="22" height="22" viewBox="-11 -11 22 22"><path d="M-9 3L-2 -2.5L9 -0.5L3.5 7.5Z" fill="#c6ecf8" stroke="#6ec9ec" stroke-width="0.7"/><path d="M-6 3L3 5.5M-4 1L5.5 3M-2 -0.8L7 1M-3.5 4.5L2 -1.5M0.5 6L5 -0.8" stroke="#8fd6f0" stroke-width="0.6"/><path d="M-1.5 -9.5H1.5V1L0 3L-1.5 1Z" fill="#a9aeb3" stroke="#8a8f94" stroke-width="0.4"/><path d="M-0.3 -9.5V1.5" stroke="#d9dcdf" stroke-width="0.7"/></svg>
<svg style="left:509.5px;top:25.5px" width="22" height="22" viewBox="-11 -11 22 22"><circle cx="-3.5" cy="3" r="5" fill="#83d2f0"/><path d="M-6.5 -4.5L-3 -1.5" stroke="#83d2f0" stroke-width="2"/><path d="M-2 0.5L6.5 -7" stroke="#83d2f0" stroke-width="3.6" stroke-linecap="round"/><path d="M-1.5 0.3L6.3 -6.8" stroke="#eaf8fd" stroke-width="1.6" stroke-linecap="round"/><path d="M-6 5.5Q-3.5 7.5 -1 5.5" stroke="#4fb3d9" stroke-width="0.7" fill="none"/></svg>
<svg style="left:529.0px;top:25.5px" width="22" height="22" viewBox="-11 -11 22 22"><path d="M-9 -4L-3 -1.5L-9 1.5Z" fill="#d3322c"/><path d="M-3 -1.5L0 -1.5" stroke="#e08a2e" stroke-width="1.4"/><path d="M0.5 -3.5H6.5L7 3L2 4.5L1 8H-2.5L-0.5 1.5Z" fill="#d4f0fa" stroke="#6ec9ec" stroke-width="1"/><path d="M-6 6.5Q-2 4 -0.5 8" stroke="#6ec9ec" stroke-width="1" fill="none"/><rect x="1.5" y="-9" width="4.6" height="3" fill="#4a4a52"/><rect x="2" y="-6" width="3.6" height="2.5" fill="#8a8f94"/></svg>
<svg style="left:553.5px;top:25.5px" width="22" height="22" viewBox="-11 -11 22 22"><path d="M-5.5 7V4H0.5V7Z" fill="#3fa9c4"/><path d="M-8 7.4H3" stroke="#3fa9c4" stroke-width="1.1"/><path d="M-3 4L-1 -6L5 -1" stroke="#3fa9c4" stroke-width="1.8" fill="none" stroke-linejoin="round"/><circle cx="-1" cy="-6" r="1.3" fill="#2f96ae"/><path d="M3.5 0.3H8.5M7.6 0.3V2.6" stroke="#777" stroke-width="0.9"/><path d="M2.5 3.4H9" stroke="#c4c7ca" stroke-width="0.7"/></svg>
<svg style="left:585.0px;top:25.5px" width="22" height="22" viewBox="-11 -11 22 22"><path d="M-1.5 -4H-8.5V6.5H8.5V-4H3.5" fill="#f4fbfd" stroke="#9ad8ee" stroke-width="1.1"/><path d="M-5.5 0Q-2 7 3 4T7 5" stroke="#bfe6f3" stroke-width="0.8" fill="none"/><rect x="-0.8" y="-10" width="3.6" height="4" fill="#2f96ae"/><path d="M-2.5 -6.5H4.5L1 -1.5Z" fill="#1f7f98"/><path d="M1 -1.5V2.5" stroke="#6ec9ec" stroke-width="0.8"/></svg>
<svg style="left:611.5px;top:25.5px" width="22" height="22" viewBox="-11 -11 22 22"><path d="M-8.5 5.5L-1 -1.5H9L2 5.5ZM-8.5 5.5V7.5H2V5.5M2 7.5L9 0.5V-1.5" fill="#f1fafd" stroke="#7fd0ec" stroke-width="0.9" stroke-linejoin="round"/><path d="M-3.5 3.5L1.5 -7.5L4 -7.5L-1 3.5Z" fill="#f1fafd" stroke="#7fd0ec" stroke-width="0.8"/><path d="M-1 3L6 -5.5" stroke="#a5a9ad" stroke-width="2.2" stroke-linecap="round"/></svg>
<svg style="left:631.0px;top:25.5px" width="22" height="22" viewBox="-11 -11 22 22"><path d="M-9 -8.5V7" stroke="#2f96ae" stroke-width="1.6"/><path d="M-9.8 5H9.5V8H-9.8Z" fill="#2f96ae"/><path d="M-6 6.5H8" stroke="#8fd4e4" stroke-width="0.7" stroke-dasharray="1.5 1"/><path d="M-3 0.5L7.5 -8" stroke="#9ea3a8" stroke-width="3.2" stroke-linecap="round"/><path d="M-2.6 -0.2L7 -8" stroke="#e2e5e8" stroke-width="1.2" stroke-linecap="round"/><circle cx="-4.3" cy="1.8" r="3" fill="#f6c343"/></svg>
<svg style="left:654.5px;top:25.5px" width="22" height="22" viewBox="-11 -11 22 22"><path d="M-8 -5L1 -8.5V2L-8 6.5Z" fill="#2f96ae"/><path d="M-8 6.5L1 2L9.5 3.5L-1 9Z" fill="#3fa5bc"/><path d="M1 -8.5L3 -8V1.5L1 2Z" fill="#1f7f98"/><path d="M-6.5 5.5L1.5 1.2" stroke="#f6c343" stroke-width="2"/><path d="M-5 -3.5L0 -5.5M-5 -1.5L0 -3.5" stroke="#9ad8e6" stroke-width="0.6"/></svg>
<svg style="left:681.5px;top:25.5px" width="22" height="22" viewBox="-11 -11 22 22"><path d="M-9 2L0.5 -5L9.5 -4L0.5 3.5Z" fill="#3fa5bc"/><path d="M-9 2L0.5 3.5V7.5L-9 5.5Z" fill="#2f96ae"/><path d="M0.5 3.5L9.5 -4V0L0.5 7.5Z" fill="#1f7f98"/><path d="M-4.5 3L4.5 -4.8" stroke="#f6c343" stroke-width="2.4"/><path d="M-7 3.6L-2 4.4M-7 5L-2 5.8" stroke="#9ad8e6" stroke-width="0.6"/></svg>
<svg style="left:711.0px;top:25.5px" width="22" height="22" viewBox="-11 -11 22 22"><path d="M-8 -5.5H6L9 -3.5V1.5H-5L-8 -0.5Z" fill="#2f96ae"/><path d="M-6 0.5H7L9.5 2.5V7H-4L-6 5.5Z" fill="#3fa5bc"/><path d="M6 -5.5L9 -3.5V1.5L6 0Z" fill="#1f7f98"/><path d="M-8 -2.5H-3M-6 3.5H-1" stroke="#bfe6ef" stroke-width="1.2"/><circle cx="0" cy="-3" r="1.3" fill="#f6c343"/><circle cx="2" cy="3.8" r="1.3" fill="#f6c343"/><path d="M2 -1.5H7.5" stroke="#1b6f87" stroke-width="0.8" stroke-dasharray="1 1"/></svg>
<svg style="left:743.5px;top:25.0px" width="22" height="22" viewBox="-11 -11 22 22"><path d="M-7.5 3.2L0 -0.2L7.5 3.2L0 6.6Z" fill="#5ec4ea" stroke="#e9f8fd" stroke-width="0.7"/><path d="M-7.5 0.0L0 -3.4L7.5 0.0L0 3.4Z" fill="#5ec4ea" stroke="#e9f8fd" stroke-width="0.7"/><path d="M-7.5 -3.2L0 -6.6L7.5 -3.2L0 0.2Z" fill="#5ec4ea" stroke="#e9f8fd" stroke-width="0.7"/><circle cx="0" cy="-3.2" r="1.2" fill="none" stroke="#e9f8fd" stroke-width="0.6"/></svg>
<svg style="left:781.0px;top:25.5px" width="22" height="22" viewBox="-11 -11 22 22"><path d="M-2.5 -8H3L5 -6V-1.5M-2.5 -8L-6.5 -4V7.5H0" fill="none" stroke="#2f96ae" stroke-width="1.5" stroke-linejoin="round" stroke-linecap="round"/><path d="M-3.5 1.5H2.5M-3.5 1.5L-1.5 0M-3.5 1.5L-1.5 3" stroke="#2f96ae" stroke-width="1.1" fill="none"/><text x="6" y="6.4" font-family="Liberation Sans, sans-serif" font-size="10.5" fill="#b98543" text-anchor="middle">G</text></svg>
<svg style="left:820.0px;top:25.5px" width="22" height="22" viewBox="-11 -11 22 22"><rect x="-7.5" y="-8" width="15" height="15" fill="#fafdfe" stroke="#2f96ae" stroke-width="1.3"/><text x="0" y="1.6" font-family="Liberation Sans, sans-serif" font-size="6.4" fill="#7fd0ec" text-anchor="middle" textLength="12.5" lengthAdjust="spacingAndGlyphs">FSW</text></svg>
<svg style="left:853.2px;top:25.7px" width="22" height="22" viewBox="-11 -11 22 22"><defs><linearGradient id="gAb864" x1="0" y1="0" x2="0" y2="1"><stop offset="0" stop-color="#2a8ea8"/><stop offset="0.55" stop-color="#3fa2ba"/><stop offset="1" stop-color="#a4dcea"/></linearGradient></defs><circle cx="0" cy="0" r="8.8" fill="url(#gAb864)"/><circle cx="0" cy="0" r="8.4" fill="none" stroke="#8fd4e4" stroke-width="0.7"/><rect x="-0.7" y="-2.2" width="1.4" height="6.2" fill="#f4fbfd"/><circle cx="0" cy="-4.4" r="0.95" fill="#f4fbfd"/><path d="M-2.6 5.6H2.6" stroke="#e4f5f9" stroke-width="0.8"/></svg>
<svg style="left:872.8px;top:25.7px" width="22" height="22" viewBox="-11 -11 22 22"><defs><linearGradient id="gAb883" x1="0" y1="0" x2="0" y2="1"><stop offset="0" stop-color="#2a8ea8"/><stop offset="0.55" stop-color="#3fa2ba"/><stop offset="1" stop-color="#a4dcea"/></linearGradient></defs><circle cx="0" cy="0" r="8.8" fill="url(#gAb883)"/><circle cx="0" cy="0" r="8.4" fill="none" stroke="#8fd4e4" stroke-width="0.7"/><path d="M-2.4 -2.8Q-2.4 -5.2 0.2 -5.2Q2.6 -5.2 2.6 -3.2Q2.6 -1.8 1.2 -0.8Q0.2 -0.2 0.2 1.2" stroke="#f4fbfd" stroke-width="1.3" fill="none"/><path d="M-2.6 5.6H2.8" stroke="#e4f5f9" stroke-width="0.8"/><circle cx="0.2" cy="3.1" r="0.8" fill="#f4fbfd"/></svg>
<svg style="left:-1.0px;top:0.2px" width="11.2" height="11.2" viewBox="-5 -5 10 10"><path d="M-3.6 -4.2H3.6V1Q3.6 3.5 0 4.8Q-3.6 3.5 -3.6 1Z" fill="#2e86a6"/><path d="M-2.2 -3L0 -0.5L2.2 -3L2.4 0.5L0 3L-2.4 0.5Z" fill="#f2f6f8"/><path d="M-1 -0.5L0 1.5L1 -0.5Z" fill="#2b3f6e"/></svg>
<div style="left:13.0px;top:1.5px;width:1.0px;height:8.5px;background:#cfd3d5;"></div>
<svg style="left:17.4px;top:0.2px" width="11.2" height="11.2" viewBox="-5 -5 10 10"><path d="M-2.8 -4.2H1L3 -2.2V4.4H-2.8Z" fill="#fdfefe" stroke="#c9ced1" stroke-width="0.6"/></svg>
<svg style="left:31.4px;top:0.4px" width="11.2" height="11.2" viewBox="-5 -5 10 10"><path d="M-4 -1.5H-1L0 -0.5H4V4H-4Z" fill="#f3b93a"/><path d="M-4 0.8H4V4H-4Z" fill="#f9d061"/><path d="M-3 -2L-0.5 -4.5L1.5 -2.5" fill="#d83a2e"/></svg>
<svg style="left:43.7px;top:0.2px" width="11.2" height="11.2" viewBox="-5 -5 10 10"><rect x="-4" y="-4" width="8" height="8" fill="#4a6683"/><rect x="-2.8" y="-4" width="5.6" height="3.4" fill="#a5dcef"/><rect x="-2.7" y="1" width="5.4" height="3" fill="#2c3f57"/><rect x="-1.8" y="1.8" width="1.4" height="2.2" fill="#dfe6ea"/></svg>
<svg style="left:56.2px;top:0.5px" width="11.2" height="11.2" viewBox="-5 -5 10 10"><rect x="-2.5" y="-3.6" width="5" height="2.6" fill="#f2f4f5" stroke="#9ea3a6" stroke-width="0.5"/><rect x="-4" y="-1.2" width="8" height="4" rx="0.8" fill="#6b7075"/><rect x="-2.5" y="1" width="5" height="1.2" fill="#d4d7d8"/></svg>
<svg style="left:68.9px;top:0.5px" width="11.2" height="11.2" viewBox="-5 -5 10 10"><rect x="-2.5" y="-3.6" width="5" height="2.6" fill="#f2d9b0" stroke="#b98543" stroke-width="0.5"/><rect x="-4" y="-1.2" width="8" height="4" rx="0.8" fill="#6b7075"/><rect x="-2.5" y="1" width="5" height="1.2" fill="#d4d7d8"/><circle cx="-3" cy="-3" r="1" fill="#e08a2e"/></svg>
<svg style="left:81.9px;top:0.2px" width="11.2" height="11.2" viewBox="-5 -5 10 10"><path d="M-3 1Q0 -3.5 3.5 1" stroke="#58a8d8" stroke-width="1.1" fill="none"/><path d="M-4.3 -1.3L-3 1.8L-0.8 -0.3Z" fill="#58a8d8"/></svg>
<svg style="left:94.9px;top:0.2px" width="11.2" height="11.2" viewBox="-5 -5 10 10"><path d="M3 1Q0 -3.5 -3.5 1" stroke="#c6cacc" stroke-width="1.2" fill="none"/><path d="M4.3 -1.3L3 1.8L0.8 -0.3Z" fill="#c6cacc"/></svg>
<svg style="left:107.4px;top:0.2px" width="11.2" height="11.2" viewBox="-5 -5 10 10"><circle cx="0" cy="0" r="3.4" fill="none" stroke="#5fbfdc" stroke-width="1" stroke-dasharray="4.3 1.1"/></svg>
<svg style="left:118.2px;top:0.8px" width="11.2" height="11.2" viewBox="-5 -5 10 10"><path d="M-1.8 -1H1.8L0 1.6Z" fill="#444"/><path d="M-1.8 -2.2H1.8" stroke="#444" stroke-width="0.6"/></svg>
<svg style="left:126.9px;top:0.2px" width="11.2" height="11.2" viewBox="-5 -5 10 10"><path d="M1.6 -3L-1.8 0L1.6 3Z" fill="#5a9fe0"/></svg>
<svg style="left:990.7px;top:1.5px" width="10" height="10" viewBox="-5 -5 10 10"><ellipse cx="0" cy="0" rx="2.4" ry="1.2" fill="none" stroke="#c9cdd0" stroke-width="0.7"/></svg>
<svg style="left:1002.6px;top:0.5px" width="10" height="10" viewBox="-5 -5 10 10"><rect x="-3" y="-1.6" width="4.4" height="4.2" fill="#f2f4f5" stroke="#aab0b3" stroke-width="0.7"/><rect x="-1.2" y="-3.2" width="4.4" height="4" fill="none" stroke="#aab0b3" stroke-width="0.7"/></svg>
<svg style="left:1015.0px;top:0.3px" width="10" height="10" viewBox="-5 -5 10 10"><path d="M-2.6 -2.6L2.6 2.6M2.6 -2.6L-2.6 2.6" stroke="#c9cdd0" stroke-width="0.9"/><rect x="-3" y="-3" width="6" height="6" fill="none" stroke="#d7dadc" stroke-width="0.5"/></svg>
<svg style="left:865.0px;top:13.0px" width="10" height="10" viewBox="-5 -5 10 10"><path d="M-2.6 1.6H2.6Q3.4 0.2 2 -0.4Q1.6 -2.2 0 -2Q-1.8 -2 -2 -0.3Q-3.4 0.2 -2.6 1.6Z" fill="none" stroke="#777c80" stroke-width="0.7"/></svg>
<svg style="left:951.5px;top:13.0px" width="10" height="10" viewBox="-5 -5 10 10"><circle cx="-0.6" cy="-0.4" r="2.7" fill="none" stroke="#a9aeb1" stroke-width="0.7"/><path d="M1.5 1.7L3.4 3.4" stroke="#a9aeb1" stroke-width="0.8"/></svg>
<svg style="left:967.6px;top:13.0px" width="10" height="10" viewBox="-5 -5 10 10"><circle cx="0" cy="0" r="3.6" fill="none" stroke="#a3a8ab" stroke-width="0.7"/><circle cx="0" cy="-0.8" r="1.2" fill="none" stroke="#a3a8ab" stroke-width="0.6"/><path d="M-2 2.2Q0 0 2 2.2" fill="none" stroke="#a3a8ab" stroke-width="0.6"/></svg>
<svg style="left:982.8px;top:12.6px" width="10" height="10" viewBox="-5 -5 10 10"><circle cx="0" cy="0" r="4" fill="#2c62c8"/><circle cx="-0.8" cy="-1.2" r="2" fill="#6f9be6" opacity="0.7"/><text x="0" y="2.2" font-family="Liberation Sans, sans-serif" font-size="6" font-weight="bold" fill="#fff" text-anchor="middle">?</text></svg>
<svg style="left:992.0px;top:13.0px" width="10" height="10" viewBox="-5 -5 10 10"><path d="M-1.5 -0.8H1.5L0 1.2Z" fill="#333"/></svg>
<svg style="left:1000.0px;top:14.5px" width="10" height="10" viewBox="-5 -5 10 10"><rect x="-2" y="0.6" width="4" height="1.3" fill="#222"/></svg>
<svg style="left:1008.5px;top:13.0px" width="10" height="10" viewBox="-5 -5 10 10"><rect x="-2.6" y="-0.8" width="4" height="3.2" fill="#fff" stroke="#222" stroke-width="1"/><path d="M-1 -2.4H3V1" stroke="#222" stroke-width="1" fill="none"/></svg>
<svg style="left:1016.6px;top:13.2px" width="10" height="10" viewBox="-5 -5 10 10"><path d="M-2.2 -2.2L2.2 2.2M2.2 -2.2L-2.2 2.2" stroke="#222" stroke-width="1.2"/></svg>
<svg style="left:6.3px;top:78.0px" width="10" height="10" viewBox="-5 -5 10 10"><path d="M-3.6 -2.6L-1 3.4L1 -0.5Z" fill="#3c7fd6"/><path d="M-2.6 -3.2L0.4 2.4" stroke="#4bb7d9" stroke-width="1"/><path d="M0.5 -0.5L3.8 -2.6L2.6 1L0.8 2.4Z" fill="#e9a92e"/></svg>
<svg style="left:18.8px;top:78.0px" width="10" height="10" viewBox="-5 -5 10 10"><path d="M-3.6 0H3.6M0 -3.6V3.6" stroke="#b4b8ba" stroke-width="1.7"/></svg>
<svg style="left:31.8px;top:78.0px" width="10" height="10" viewBox="-5 -5 10 10"><path d="M-3.6 0H3.6" stroke="#a9adb0" stroke-width="1.7"/></svg>
<svg style="left:45.0px;top:78.0px" width="10" height="10" viewBox="-5 -5 10 10"><rect x="-3.6" y="-3.4" width="7.2" height="7" fill="#f4f7f8" stroke="#5aa7c8" stroke-width="0.7" stroke-dasharray="1.2 0.7"/><path d="M-1.5 -1.5L2 0.3L-1.5 2.2Z" fill="#8a8f92"/><circle cx="2.6" cy="-3" r="1.3" fill="#b06a3a"/></svg>
<svg style="left:53.0px;top:78.0px" width="10" height="10" viewBox="-5 -5 10 10"><path d="M-1.6 -0.8H1.6L0 1.3Z" fill="#333"/></svg>
<svg style="left:63.3px;top:77.4px" width="12" height="12" viewBox="-6 -6 12 12"><path d="M-2.3 -4.3H2.3L4.6 0L2.3 4.3H-2.3L-4.6 0Z" fill="#eef4f6" stroke="#8fd0e6" stroke-width="0.8"/></svg>
<svg style="left:80.0px;top:78.0px" width="10" height="10" viewBox="-5 -5 10 10"><path d="M-3.2 -0.8V3.4M-1.6 -0.8V3.4M0 -0.8V3.4" stroke="#6e7275" stroke-width="1"/><path d="M0.6 -3.6H4.2L2.8 -1.8V0.2L2 -0.4V-1.8Z" fill="#8e9396"/></svg>
<svg style="left:153.0px;top:78.0px" width="10" height="10" viewBox="-5 -5 10 10"><path d="M-1.4 -0.7H1.4L0 1.1Z" fill="#a9adb0"/></svg>
<svg style="left:164.8px;top:78.0px" width="10" height="10" viewBox="-5 -5 10 10"><path d="M-3.6 1Q-2.5 -3.5 2 -3Q-0.5 -1.8 -0.8 0.5Q1 2.5 3.6 1.5Q1.5 4 -1.5 3.2Q-3.4 2.6 -3.6 1Z" fill="#3f8fd2"/><path d="M0 -1.6L3.8 -1L2 1.6Z" fill="#f0b232"/><path d="M1.2 -3.6L3.4 -2.8" stroke="#3f8fd2" stroke-width="1"/></svg>
<svg style="left:237.0px;top:78.0px" width="10" height="10" viewBox="-5 -5 10 10"><path d="M-1.6 -0.8H1.6L0 1.3Z" fill="#222"/></svg>
<svg style="left:247.5px;top:78.0px" width="10" height="10" viewBox="-5 -5 10 10"><path d="M-3.6 -1.6H3.6M-3.6 0.4H3.6" stroke="#a9adb0" stroke-width="0.8"/><path d="M0.5 1.2H3.6V3H0.5Z" fill="#a9adb0"/></svg>
<svg style="left:261.0px;top:78.0px" width="10" height="10" viewBox="-5 -5 10 10"><path d="M-2.6 -2.6H2V-0.4H3.4V2.8H-3.4V-0.4H-2.6Z" fill="#b9bdc0"/></svg>
<svg style="left:276.0px;top:78.0px" width="10" height="10" viewBox="-5 -5 10 10"><path d="M-1.4 -3V3M1 -3V3" stroke="#9ea2a5" stroke-width="1" stroke-dasharray="1.4 0.8"/><path d="M2.6 -1.5V1.5" stroke="#c2c6c8" stroke-width="0.6"/></svg>
<svg style="left:289.0px;top:78.0px" width="10" height="10" viewBox="-5 -5 10 10"><path d="M-1.4 -3V3M1 -3V3" stroke="#9ea2a5" stroke-width="1" stroke-dasharray="1.4 0.8"/><path d="M2.6 -1.5V1.5" stroke="#c2c6c8" stroke-width="0.6"/></svg>
<svg style="left:315.5px;top:78.0px" width="10" height="10" viewBox="-5 -5 10 10"><path d="M-1.4 -3V3M1 -3V3" stroke="#9ea2a5" stroke-width="1" stroke-dasharray="1.4 0.8"/><path d="M2.6 -1.5V1.5" stroke="#c2c6c8" stroke-width="0.6"/></svg>
<svg style="left:302.0px;top:78.0px" width="10" height="10" viewBox="-5 -5 10 10"><path d="M-1.4 -3V3" stroke="#9ea2a5" stroke-width="1" stroke-dasharray="1.4 0.8"/><path d="M0.8 -3V3" stroke="#3f7fc6" stroke-width="1.2"/><path d="M2.6 -1.5V1.5" stroke="#c2c6c8" stroke-width="0.6"/></svg>
<svg style="left:329.0px;top:78.0px" width="10" height="10" viewBox="-5 -5 10 10"><path d="M-2.4 -2.6L0.4 -3.2V3.2L-2.4 2.2Z" fill="#3f7fd0"/><path d="M0.4 -3.2L2.6 -2V2.4L0.4 3.2Z" fill="#d8452e"/></svg>
<svg style="left:342.0px;top:78.0px" width="10" height="10" viewBox="-5 -5 10 10"><rect x="-3.8" y="-3.2" width="7.6" height="6.6" fill="#fbf3d8" stroke="#d8a238" stroke-width="0.6"/><path d="M-3.8 -1.2H3.8M-3.8 1H3.8" stroke="#b9843a" stroke-width="0.7"/><rect x="-3.8" y="-3.2" width="7.6" height="1.6" fill="#d8452e"/></svg>
<svg style="left:355.0px;top:78.0px" width="10" height="10" viewBox="-5 -5 10 10"><rect x="-3.8" y="-3" width="7.6" height="6.4" fill="#3f8fd2"/><rect x="-2.6" y="-1.6" width="5.2" height="4" fill="#f6cb52"/><circle cx="2" cy="1.4" r="1.4" fill="#e9a92e" stroke="#fff" stroke-width="0.3"/></svg>
<svg style="left:368.0px;top:78.0px" width="10" height="10" viewBox="-5 -5 10 10"><rect x="-3.8" y="-3" width="7.6" height="6.4" fill="#3f8fd2"/><circle cx="0" cy="0.3" r="2.2" fill="#f6cb52"/><path d="M-3.8 -3H0V0Z" fill="#6bc2e0"/><rect x="1.6" y="1" width="2.2" height="2.4" fill="#e06a3a"/></svg>
<svg style="left:380.5px;top:78.0px" width="10" height="10" viewBox="-5 -5 10 10"><path d="M-3.8 3.4V-1L-1.4 -3.2L0.6 -1L2.6 -2.4L3.8 -1V3.4Z" fill="#3f8fd2"/><circle cx="1.8" cy="0.8" r="1.7" fill="#f6cb52"/><path d="M-3 2.6H0" stroke="#1d3f6e" stroke-width="0.9"/></svg>
<svg style="left:397.0px;top:78.0px" width="10" height="10" viewBox="-5 -5 10 10"><circle cx="0" cy="0" r="3.5" fill="none" stroke="#a5a9ac" stroke-width="0.8"/><path d="M0 -2V0.3L1.4 1.2" stroke="#a5a9ac" stroke-width="0.7" fill="none"/></svg>
<svg style="left:410.0px;top:78.0px" width="10" height="10" viewBox="-5 -5 10 10"><path d="M-1.8 3V-2.6H1.8V3" stroke="#b4b8bb" stroke-width="0.9" fill="none"/></svg>
<svg style="left:423.0px;top:78.0px" width="10" height="10" viewBox="-5 -5 10 10"><rect x="-3.4" y="-3.2" width="6.8" height="6.6" fill="#eef0f1" stroke="#b4b8bb" stroke-width="0.6"/><rect x="-2" y="-1.9" width="4" height="4" fill="#2a2d33"/></svg>
<svg style="left:494.5px;top:78.0px" width="10" height="10" viewBox="-5 -5 10 10"><path d="M-1.4 -0.7H1.4L0 1.1Z" fill="#a9adb0"/></svg>
<svg style="left:503.5px;top:78.0px" width="10" height="10" viewBox="-5 -5 10 10"><path d="M-3 2.5L-1 -2.5L1.5 1L3 -1" stroke="#b9bdc0" stroke-width="0.9" fill="none"/></svg>
<svg style="left:518.0px;top:78.0px" width="10" height="10" viewBox="-5 -5 10 10"><circle cx="0" cy="0" r="2.4" fill="none" stroke="#a5a9ac" stroke-width="1.6" stroke-dasharray="1.3 0.9"/><circle cx="0" cy="0" r="1" fill="#a5a9ac"/></svg>
<svg style="left:532.0px;top:78.0px" width="10" height="10" viewBox="-5 -5 10 10"><circle cx="0" cy="0" r="3.5" fill="none" stroke="#a5a9ac" stroke-width="0.8"/><path d="M-1.2 -1.8L2 0L-1.2 1.8Z" fill="#a5a9ac"/></svg>
<svg style="left:545.0px;top:78.0px" width="10" height="10" viewBox="-5 -5 10 10"><circle cx="-2.6" cy="0" r="0.8" fill="#a5a9ac"/><circle cx="2.6" cy="0" r="0.8" fill="#a5a9ac"/><circle cx="0" cy="-2.6" r="0.8" fill="#a5a9ac"/><circle cx="0" cy="2.6" r="0.8" fill="#a5a9ac"/><circle cx="0" cy="0" r="0.7" fill="#a5a9ac"/></svg>
<svg style="left:559.0px;top:78.0px" width="10" height="10" viewBox="-5 -5 10 10"><path d="M-3.4 3.4L3.4 -3.4" stroke="#a5a9ac" stroke-width="0.8"/></svg>
<svg style="left:571.5px;top:78.0px" width="10" height="10" viewBox="-5 -5 10 10"><path d="M-3.4 3.4L3.4 -3.4" stroke="#a5a9ac" stroke-width="0.8"/><circle cx="0" cy="0" r="0.9" fill="#a5a9ac"/></svg>
<svg style="left:584.5px;top:78.0px" width="10" height="10" viewBox="-5 -5 10 10"><circle cx="0" cy="0" r="3.5" fill="none" stroke="#a5a9ac" stroke-width="0.8"/><circle cx="0" cy="0" r="0.8" fill="#a5a9ac"/></svg>
<svg style="left:597.0px;top:78.0px" width="10" height="10" viewBox="-5 -5 10 10"><circle cx="0" cy="0" r="3.5" fill="none" stroke="#a5a9ac" stroke-width="0.9"/></svg>
<svg style="left:610.0px;top:78.0px" width="10" height="10" viewBox="-5 -5 10 10"><path d="M-3.6 1L-1.6 -3L0.4 3L2 -1L3.6 1" stroke="#a5a9ac" stroke-width="0.8" fill="none"/></svg>
<svg style="left:622.5px;top:78.0px" width="10" height="10" viewBox="-5 -5 10 10"><path d="M-3.6 1.5Q-2 -4 0 0T3.6 -1" stroke="#a5a9ac" stroke-width="0.8" fill="none"/></svg>
<svg style="left:636.0px;top:78.0px" width="10" height="10" viewBox="-5 -5 10 10"><path d="M-3.6 -1.6Q0 -3.4 3.6 -1.6M-1.6 -2.2L-3 3M1.6 -2.2L3 3" stroke="#a5a9ac" stroke-width="0.8" fill="none"/></svg>
<svg style="left:649.0px;top:78.0px" width="10" height="10" viewBox="-5 -5 10 10"><path d="M-3.2 3.2L3 -3" stroke="#a5a9ac" stroke-width="0.8"/><path d="M3.4 -3.4L1 -2.6L2.6 -1Z" fill="#a5a9ac"/></svg>
<svg style="left:661.5px;top:78.0px" width="10" height="10" viewBox="-5 -5 10 10"><path d="M-3.6 0L0 -2.6L3.6 -0.6L2 2.6L-1.6 3Z" fill="#b4b8bb"/></svg>
<svg style="left:674.0px;top:78.0px" width="10" height="10" viewBox="-5 -5 10 10"><path d="M-3.6 -0.6L0 -2.8L3.6 -0.6L0 1.4ZM-2.6 1.2L0 3L2.6 1.2" fill="#b4b8bb" stroke="#a5a9ac" stroke-width="0.5"/></svg>
<svg style="left:451.0px;top:105.6px" width="10" height="10" viewBox="-5 -5 10 10"><path d="M-1 -3.4H3.4V3.4H-1" stroke="#3f93b5" stroke-width="0.9" fill="none"/><path d="M-3.8 0H1" stroke="#c85a2e" stroke-width="1.1"/><path d="M-3.9 0L-1.6 -1.8V1.8Z" fill="#c85a2e"/></svg>
<svg style="left:464.0px;top:105.6px" width="10" height="10" viewBox="-5 -5 10 10"><path d="M-3.6 -3.2V3L3.6 3" stroke="#4a9ec2" stroke-width="1" fill="none"/><path d="M-2 1.2L0 -1.8L3.4 0.4L1.4 2.4Z" fill="#b7bcbf"/><circle cx="-1.8" cy="-2" r="1.2" fill="#6fbf4a"/></svg>
<svg style="left:472.5px;top:105.6px" width="10" height="10" viewBox="-5 -5 10 10"><path d="M-1.5 -0.8H1.5L0 1.2Z" fill="#333"/></svg>
<svg style="left:485.0px;top:105.6px" width="10" height="10" viewBox="-5 -5 10 10"><path d="M-3 3L2 -2.6L3.4 -1.4L-1.6 3.6Z" fill="#e9a83a"/><path d="M-3.4 3.8L-2.8 2L-1.2 3.4Z" fill="#c8452e"/></svg>
<svg style="left:497.5px;top:105.6px" width="10" height="10" viewBox="-5 -5 10 10"><path d="M-3.8 -1.6L0.4 -3.6L4 -2L-0.2 0.2Z" fill="#f2c54a"/><path d="M-3.8 -1.6L-0.2 0.2V4L-3.8 2Z" fill="#3f9fc9"/><path d="M-0.2 0.2L4 -2V1.8L-0.2 4Z" fill="#2c86b0"/></svg>
<svg style="left:510.7px;top:105.6px" width="10" height="10" viewBox="-5 -5 10 10"><path d="M-3.8 -1.6L0.4 -3.6L4 -2L-0.2 0.2Z" fill="#6cc4e6"/><path d="M-3.8 -1.6L-0.2 0.2V4L-3.8 2Z" fill="#3f9fc9"/><path d="M-0.2 0.2L4 -2V1.8L-0.2 4Z" fill="#2c86b0"/></svg>
<svg style="left:519.0px;top:105.6px" width="10" height="10" viewBox="-5 -5 10 10"><path d="M-1.5 -0.8H1.5L0 1.2Z" fill="#333"/></svg>
<svg style="left:530.7px;top:105.6px" width="10" height="10" viewBox="-5 -5 10 10"><path d="M-3.8 -1.6L0.4 -3.6L4 -2L-0.2 0.2ZM-3.8 -1.6L-0.2 0.2V4L-3.8 2ZM-0.2 0.2L4 -2V1.8L-0.2 4Z" fill="#fbfcfc" stroke="#9ea3a6" stroke-width="0.6" stroke-linejoin="round"/></svg>
<svg style="left:540.0px;top:105.6px" width="10" height="10" viewBox="-5 -5 10 10"><path d="M-1.5 -0.8H1.5L0 1.2Z" fill="#333"/></svg>
<svg style="left:550.6px;top:105.6px" width="10" height="10" viewBox="-5 -5 10 10"><path d="M-3.8 -1.6L0.4 -3.6L4 -2L-0.2 0.2Z" fill="#f2c54a"/><path d="M-3.8 -1.6L-0.2 0.2V4L-3.8 2Z" fill="#f0b63a"/><path d="M-0.2 0.2L4 -2V1.8L-0.2 4Z" fill="#2c86b0"/></svg>
<svg style="left:559.0px;top:105.6px" width="10" height="10" viewBox="-5 -5 10 10"><path d="M-1.5 -0.8H1.5L0 1.2Z" fill="#333"/></svg>
<svg style="left:570.5px;top:105.6px" width="10" height="10" viewBox="-5 -5 10 10"><rect x="-3.8" y="-3.8" width="7.6" height="7.6" fill="#cfeaf4" stroke="#3f93b5" stroke-width="0.9"/><path d="M-2.4 2.6V-0.6L0 -2.6L2.4 -0.6V2.6Z" fill="#e9a83a" stroke="#b9783a" stroke-width="0.5"/><rect x="-0.8" y="0.4" width="1.6" height="2.2" fill="#fdfdfd"/></svg>
<svg style="left:579.0px;top:105.6px" width="10" height="10" viewBox="-5 -5 10 10"><path d="M-1.5 -0.8H1.5L0 1.2Z" fill="#333"/></svg>
<svg style="left:590.0px;top:105.6px" width="10" height="10" viewBox="-5 -5 10 10"><circle cx="0" cy="0" r="2.8" fill="none" stroke="#d88a3a" stroke-width="1"/><path d="M0 -4V4M-4 0H4" stroke="#b9783a" stroke-width="0.7"/><circle cx="0" cy="0" r="1" fill="#8a8f92"/></svg>
<svg style="left:598.7px;top:105.6px" width="10" height="10" viewBox="-5 -5 10 10"><path d="M-1.5 -0.8H1.5L0 1.2Z" fill="#333"/></svg>
<svg style="left:610.0px;top:105.6px" width="10" height="10" viewBox="-5 -5 10 10"><rect x="-3.6" y="-3.6" width="7.2" height="7.2" fill="#f8fbfc" stroke="#a9cfe0" stroke-width="0.8"/><rect x="-2.6" y="0.6" width="2.2" height="2" fill="#4a9ec2"/><circle cx="1.8" cy="-1.6" r="0.7" fill="#4a9ec2"/></svg>
<svg style="left:623.4px;top:105.6px" width="10" height="10" viewBox="-5 -5 10 10"><path d="M-3 -3.8V3.8M3 -3.8V3.8" stroke="#3f93b5" stroke-width="1"/><path d="M-3 1H3" stroke="#c85a2e" stroke-width="1"/><path d="M-3 -1.2H3" stroke="#9fd0e4" stroke-width="0.6"/></svg>
<svg style="left:632.0px;top:105.6px" width="10" height="10" viewBox="-5 -5 10 10"><path d="M-1.5 -0.8H1.5L0 1.2Z" fill="#333"/></svg>
<svg style="left:643.3px;top:105.6px" width="10" height="10" viewBox="-5 -5 10 10"><rect x="-4" y="-3.6" width="8" height="6.6" fill="#5a5f66" stroke="#3a3e44" stroke-width="0.6"/><rect x="-3" y="-2.6" width="6" height="2" fill="#8e949b"/><path d="M-3 3H3V4H-3Z" fill="#8e949b"/></svg>
<svg style="left:652.0px;top:105.6px" width="10" height="10" viewBox="-5 -5 10 10"><path d="M-1.5 -0.8H1.5L0 1.2Z" fill="#333"/></svg>
<svg style="left:662.6px;top:105.6px" width="10" height="10" viewBox="-5 -5 10 10"><rect x="-4" y="-1.5" width="8" height="3" rx="0.6" fill="#23262b"/></svg>
<svg style="left:676.5px;top:105.6px" width="10" height="10" viewBox="-5 -5 10 10"><rect x="-3.8" y="-3.8" width="7.6" height="7.6" fill="#cdeef8" stroke="#4a5560" stroke-width="0.8"/></svg>
<svg style="left:689.0px;top:105.6px" width="10" height="10" viewBox="-5 -5 10 10"><path d="M-4 -1.4L0 -3.4L4 -1.4L0 0.8Z" fill="#6cc4e6"/><path d="M-4 -1.4V0.8L0 3.2L4 0.8V-1.4L0 0.8Z" fill="#3f9fc9"/></svg>
<svg style="left:698.0px;top:105.6px" width="10" height="10" viewBox="-5 -5 10 10"><path d="M-1.5 -0.8H1.5L0 1.2Z" fill="#333"/></svg>
<div style="left:708.5px;top:103.6px;width:61.0px;height:12.0px;background:#eceeee;"></div>
<svg style="left:710.0px;top:105.6px" width="10" height="10" viewBox="-5 -5 10 10"><path d="M-1.6 0.4Q-2.6 -3.4 0 -3.4Q2.6 -3.4 1.6 0.4L1 1.6H-1Z" fill="#fafafa" stroke="#aaaeb1" stroke-width="0.6"/><path d="M-0.9 2.4H0.9M-0.7 3.3H0.7" stroke="#aaaeb1" stroke-width="0.6"/></svg>
<svg style="left:718.0px;top:105.6px" width="10" height="10" viewBox="-5 -5 10 10"><circle cx="0" cy="0" r="2.9" fill="#d9dcdd" stroke="#a5a9ac" stroke-width="0.7"/></svg>
<div class="t l " style="left:729.0px;top:107.8px;color:#8a8e91;font-size:6.9px"><span class="c">图层</span>0000</div>
<svg style="left:760.0px;top:105.6px" width="10" height="10" viewBox="-5 -5 10 10"><path d="M-1.3 -0.7H1.3L0 1Z" fill="#a9adb0"/></svg>
<svg style="left:2.0px;top:106.5px" width="14" height="14" viewBox="-7 -7 14 14"><rect x="-6" y="-6" width="12" height="12" rx="1.5" fill="#e9f6fa" stroke="#3f9fb8" stroke-width="1.2"/><path d="M-2 -3V3.5M2.4 -2V3.5" stroke="#2f6fd0" stroke-width="1.3"/><circle cx="-2" cy="-3.4" r="1" fill="#2f6fd0"/><circle cx="2.6" cy="-3.6" r="1.1" fill="#d3322c"/><circle cx="4.6" cy="5.6" r="1.3" fill="#f0a030"/></svg>
<svg style="left:2.0px;top:133.0px" width="14" height="14" viewBox="-7 -7 14 14"><path d="M-6 -4L-2.5 -6L1 -4.5L-2.5 -2.5Z" fill="#8fd4e8"/><path d="M-6 -4V-0.5L-2.5 1.2V-2.5Z" fill="#3f9fc9"/><path d="M-2.5 -2.5L1 -4.5V-1L-2.5 1.2Z" fill="#5eb6d8"/><path d="M-2.5 1.2V5H0M1 -2.6H5.6" stroke="#9a9ea3" stroke-width="0.8" fill="none"/><rect x="0.2" y="3" width="2.2" height="2.6" fill="#fff" stroke="#9a9ea3" stroke-width="0.6"/><rect x="3.6" y="3" width="2.4" height="2.6" fill="#fff" stroke="#9a9ea3" stroke-width="0.6"/></svg>
<svg style="left:2.0px;top:157.5px" width="14" height="14" viewBox="-7 -7 14 14"><rect x="-2" y="-5.5" width="4.4" height="3.6" fill="#6cc4e6"/><path d="M0.2 -2V0.5M-3.6 3V0.5H4V3" stroke="#3f9fc9" stroke-width="0.8" fill="none"/><rect x="-6" y="2.4" width="4.6" height="3.4" fill="#5bb8dc"/><rect x="1.6" y="2.4" width="4.6" height="3.4" fill="#f4f8fa" stroke="#9fcfe2" stroke-width="0.6"/></svg>
<svg style="left:2.0px;top:183.7px" width="14" height="14" viewBox="-7 -7 14 14"><rect x="-6" y="-5.6" width="12" height="11.4" fill="#dff1f8" stroke="#5bb8dc" stroke-width="1"/><rect x="-6" y="-5.6" width="12" height="2.2" fill="#5bb8dc"/><circle cx="0" cy="1.4" r="3" fill="#f2b33a"/><circle cx="0" cy="1.4" r="1.2" fill="#fbe3a0"/></svg>
<svg style="left:2.0px;top:209.5px" width="14" height="14" viewBox="-7 -7 14 14"><rect x="-6" y="-5.6" width="12" height="11.4" fill="#7fc6e6"/><path d="M-6 3L-2.5 -0.5L0.5 2.5L3 0.5L6 3.5V5.8H-6Z" fill="#4fa5d5"/><circle cx="3.4" cy="-2.6" r="2.4" fill="#f2b33a"/><circle cx="-4.6" cy="2.2" r="1.2" fill="#d3322c"/></svg>
<svg style="left:2.0px;top:234.5px" width="14" height="14" viewBox="-7 -7 14 14"><circle cx="-1.6" cy="-3" r="2.2" fill="#4fb0d8"/><path d="M-5.6 5.6Q-5.4 0 -1.6 0Q2 0 2.4 5.6Z" fill="#4fb0d8"/><path d="M1.5 -2L4.6 -0.5L3 5.4H0.6Z" fill="#f2b33a"/><path d="M-6.5 5.8H6.5" stroke="#9a9ea3" stroke-width="0.7"/></svg>
<svg style="left:20.0px;top:104.8px" width="12" height="12" viewBox="-6 -6 12 12"><path d="M-3.2 0.2L-1 2.4L3.4 -2.2" stroke="#3cc24a" stroke-width="2.1" fill="none" stroke-linecap="round" stroke-linejoin="round"/></svg>
<svg style="left:36.3px;top:104.5px" width="12" height="12" viewBox="-6 -6 12 12"><path d="M-2.9 -2.9L2.9 2.9M2.9 -2.9L-2.9 2.9" stroke="#c8343a" stroke-width="2.4" stroke-linecap="round"/></svg>
<svg style="left:52.3px;top:104.6px" width="12" height="12" viewBox="-6 -6 12 12"><rect x="-3.4" y="-2.4" width="6" height="5.4" fill="#fdf4f2" stroke="#c8343a" stroke-width="1.3"/><path d="M-0.6 -1.2L0.9 0.4L3.6 -3" stroke="#3cc24a" stroke-width="1.5" fill="none"/></svg>
<svg style="left:167.3px;top:104.3px" width="12" height="12" viewBox="-6 -6 12 12"><circle cx="0" cy="0" r="3.8" fill="#2f5fcf"/><rect x="-0.8" y="-2.8" width="1.6" height="5.6" fill="#f4f8ff"/></svg>
<svg style="left:179.7px;top:104.3px" width="12" height="12" viewBox="-6 -6 12 12"><path d="M-2 -3.8H1L2.4 -2.4V3.8H-2Z" fill="#f4f8fa" stroke="#5aa7c8" stroke-width="0.7"/><path d="M0 -1.5Q2 0 0 2" stroke="#e0a030" stroke-width="0.9" fill="none"/></svg>
<svg style="left:71.0px;top:132.0px" width="14" height="14" viewBox="-7 -7 14 14"><path d="M-3 -5L-3 4L-0.8 2L0.8 5.4L2 4.8L0.5 1.6L3.4 1.4Z" fill="#fdfdfd" stroke="#5a5f66" stroke-width="0.7"/></svg>
<div style="left:793.0px;top:547.0px;width:12.0px;height:11.5px;background:#f8e7b0;border:1px dotted #d9a93a;box-sizing:border-box;"></div>
<div style="left:823.0px;top:547.0px;width:12.0px;height:11.5px;background:#f8e7b0;border:1px dotted #d9a93a;box-sizing:border-box;"></div>
<svg style="left:794.0px;top:547.8px" width="10" height="10" viewBox="-5 -5 10 10"><rect x="-3.2" y="-3" width="6.4" height="6.2" fill="#fdfdfd" stroke="#6a7076" stroke-width="0.7"/><rect x="-3.2" y="-3" width="6.4" height="1.6" fill="#5a7fb5"/><path d="M0 0V2.4" stroke="#6a7076" stroke-width="0.8"/></svg>
<svg style="left:809.0px;top:547.8px" width="10" height="10" viewBox="-5 -5 10 10"><rect x="-3.8" y="-3" width="7.6" height="5" fill="#3fa9d0" stroke="#2c7fa5" stroke-width="0.6"/><path d="M-2 3.4H2M0 2V3.4" stroke="#4a5560" stroke-width="0.8"/></svg>
<svg style="left:824.0px;top:547.8px" width="10" height="10" viewBox="-5 -5 10 10"><rect x="-3.2" y="-3" width="6.4" height="6.2" fill="#f4f6f7" stroke="#6a7076" stroke-width="0.7"/><rect x="-3.2" y="-3" width="6.4" height="1.6" fill="#8e949b"/></svg>
<div style="left:921.3px;top:493.3px;width:26.0px;height:26.0px;border-radius:50%;background:#4f9cf4;border:1.6px solid #fdfdfd;box-sizing:border-box;box-shadow:0 0 2px rgba(0,0,0,.25);"></div>
<div class="t " style="left:921.5px;top:503.9px;width:26px;color:#b5dcfb;font-size:6.5px;font-weight:bold">00:12</div>
</div>
<script>(function(){try{var s=document.createElement('span');s.style.cssText='position:absolute;visibility:hidden;white-space:nowrap;font:100px "Liberation Sans",sans-serif';s.textContent='模';document.body.appendChild(s);var w=s.getBoundingClientRect().width;document.body.removeChild(s);if(w<90){document.documentElement.className+=' nocjk';}}catch(e){}})();</script>
</body></html>
